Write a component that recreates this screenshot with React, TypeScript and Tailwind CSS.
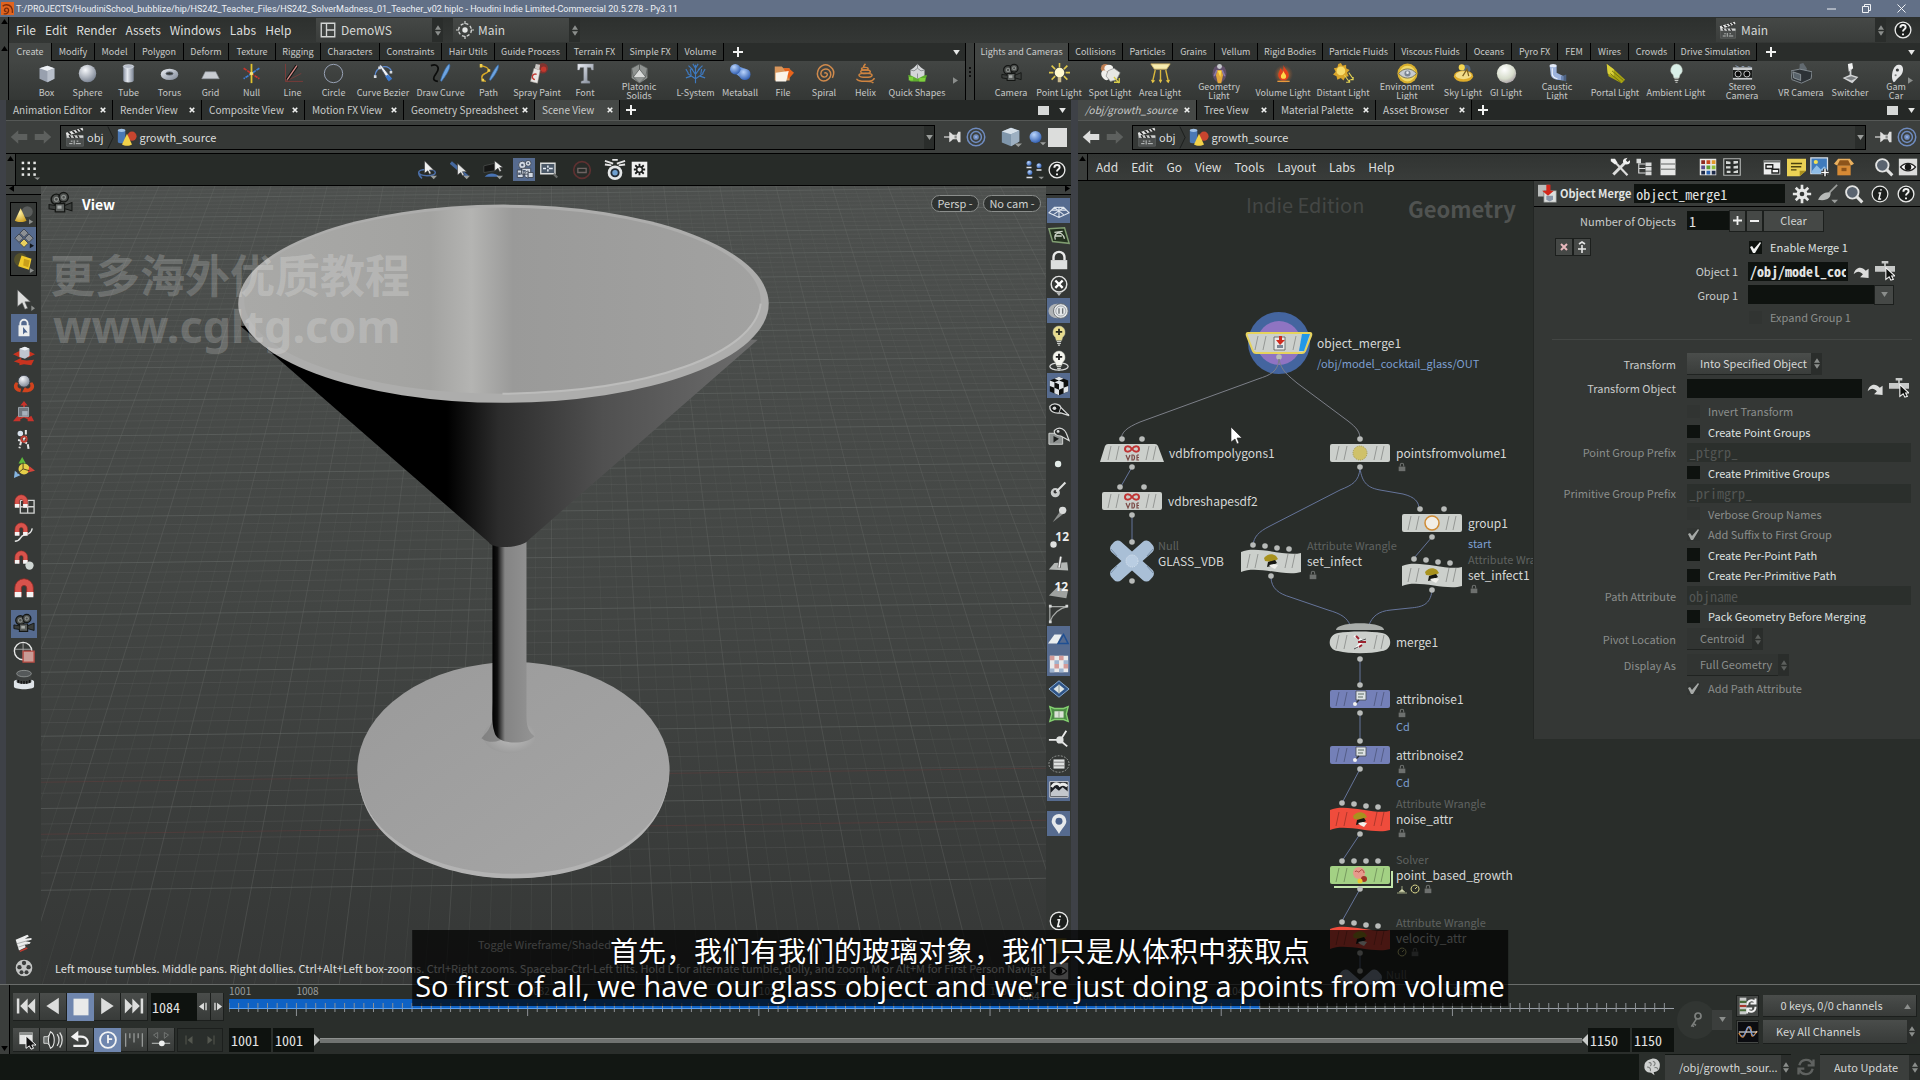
import { useId, type ReactNode } from "react";

const UI = 'font-["Noto_Sans_CJK_SC",sans-serif]';
const MONO = 'font-["Noto_Sans_Mono_CJK_SC","DejaVu_Sans_Mono",monospace]';

/* ---------- icons ---------- */

// Gradients shared by every icon
const SharedDefs = () => (
  <svg className="absolute h-0 w-0" aria-hidden="true">
    <defs>
      <linearGradient id="steel" x1="0" y1="0" x2="1" y2="1">
        <stop offset="0" stopColor="#eef1f6" />
        <stop offset="1" stopColor="#7c8594" />
      </linearGradient>
      <linearGradient id="tube" x1="0" y1="0" x2="1" y2="0">
        <stop offset="0" stopColor="#8a93a3" />
        <stop offset=".4" stopColor="#e4e8ef" />
        <stop offset="1" stopColor="#7c8594" />
      </linearGradient>
      <radialGradient id="ball" cx=".38" cy=".3" r=".75">
        <stop offset="0" stopColor="#f6f8fb" />
        <stop offset="1" stopColor="#77808f" />
      </radialGradient>
      <radialGradient id="blueBall" cx=".38" cy=".3" r=".75">
        <stop offset="0" stopColor="#b9d4fb" />
        <stop offset="1" stopColor="#2c5bb0" />
      </radialGradient>
      <radialGradient id="gold" cx=".38" cy=".3" r=".8">
        <stop offset="0" stopColor="#fff3a8" />
        <stop offset="1" stopColor="#c99a1c" />
      </radialGradient>
      <radialGradient id="giBall" cx=".4" cy=".3" r=".8">
        <stop offset="0" stopColor="#ffffff" />
        <stop offset=".6" stopColor="#d6dccb" />
        <stop offset="1" stopColor="#9c8f9b" />
      </radialGradient>
      <radialGradient id="glow">
        <stop offset="0" stopColor="#ffb347" stopOpacity=".9" />
        <stop offset="1" stopColor="#b0532a" stopOpacity="0" />
      </radialGradient>
    </defs>
  </svg>
);

const magnet = (
  <>
    <path d="M2 15V9a7 7 0 0 1 14 0v6h-5V9a2 2 0 0 0-4 0v6z" fill="#d9534c" stroke="#8f2823" strokeWidth=".6" />
    <path d="M2 12h5v4H2zM11 12h5v4h-5z" fill="#f4f4f4" />
  </>
);

const movieCam = (
  <>
    <circle cx="8" cy="8" r="5" fill="#4b4e4c" stroke="#141614" strokeWidth="1.4" />
    <circle cx="15" cy="6" r="4.5" fill="#4b4e4c" stroke="#141614" strokeWidth="1.4" />
    <circle cx="8" cy="8" r="2" fill="none" stroke="#8b8f8c" strokeWidth="1.2" />
    <circle cx="15" cy="6" r="1.8" fill="none" stroke="#8b8f8c" strokeWidth="1.2" />
    <path d="M7 12h9v8H7z" fill="#5c605e" stroke="#141614" strokeWidth="1.2" />
    <path d="M16 14l7-3v8l-7-2zM7 14l-6-1v4l6 1" fill="#3b3e3c" stroke="#141614" />
    <path d="M9 14h4v3H9z" fill="#a8acaa" />
  </>
);

const lamp = (tint: string) => (
  <>
    <path d="M12 1a7 7 0 0 0-4 12.500l1 3.500h6l1-3.500A7 7 0 0 0 12 1z" fill={tint} stroke="#a9ada0" strokeWidth=".5" />
    <path d="M9.600 18h4.800M9.900 20h4.200M10.800 22h2.400" stroke="#c9ccc8" strokeWidth="1.3" />
  </>
);

const corner = <path d="M16 19h8l-4 4z" fill="#9a9d9b" />;

const glyphs: Record<string, ReactNode> = {
  box: (
    <>
      <path d="M4 6l9-3 8 3v12l-8 4-9-4z" fill="#98a0ae" />
      <path d="M4 6l9-3 8 3-8 3z" fill="#eef1f5" />
      <path d="M13 9l8-3v12l-8 4z" fill="#b8bfca" />
    </>
  ),
  sphere: <circle cx="12" cy="12" r="10" fill="url(#ball)" />,
  tube: (
    <>
      <path d="M6 4v16c0 3 12 3 12 0V4z" fill="url(#tube)" />
      <ellipse cx="12" cy="4" rx="6" ry="2.200" fill="#b6bdc9" stroke="#e9edf3" strokeWidth=".6" />
    </>
  ),
  torus: (
    <>
      <ellipse cx="12" cy="13" rx="10" ry="6.500" fill="url(#steel)" />
      <ellipse cx="12" cy="12" rx="4" ry="1.800" fill="#343735" stroke="#5d6675" />
    </>
  ),
  grid: <path d="M6 10h12l4 8H2z" fill="#c9cdd3" stroke="#8e949d" strokeWidth=".7" />,
  null: (
    <>
      <path d="M3 6l18 12" stroke="#c9362d" strokeWidth="1.800" strokeDasharray="4 1" />
      <path d="M21 6L3 18" stroke="#3d7fd6" strokeWidth="1.800" strokeDasharray="4 1" />
      <path d="M12 1v22" stroke="#e3c42c" strokeWidth="2" />
      <circle cx="12" cy="12" r="2" fill="#f3e27a" />
    </>
  ),
  line: (
    <>
      <path d="M4 1v20h20" stroke="#8a3b38" fill="none" strokeWidth=".9" />
      <path d="M4 21L22 12" stroke="#8a3b38" strokeWidth=".8" />
      <path d="M6 19L17 3" stroke="#101210" strokeWidth="4" />
      <path d="M6 19L17 3" stroke="#d98c89" strokeWidth="1.500" />
    </>
  ),
  circle: <circle cx="12" cy="12" r="10.500" fill="none" stroke="#9aa4b8" strokeWidth="1.100" />,
  bezier: (
    <>
      <path d="M2 15C4 3 17 1 21 9" fill="none" stroke="#5c8ad0" strokeWidth="1.400" />
      <path d="M7 3l10 16 4-2L9 2z" fill="#f0f2f4" stroke="#33405a" strokeWidth=".8" />
      <path d="M14 15l4 6 4-3-5-5z" fill="#3b77c9" />
      <path d="M1 14h3v3H1zM6 4h3v3H6zM19 9h3v3h-3z" fill="#d7dbe0" />
    </>
  ),
  draw: (
    <>
      <path d="M1 3c9-3 10 4 6 9-3 4-5 8 2 9" fill="none" stroke="#0b0c0b" strokeWidth="2" />
      <path d="M22 1c3 3-4 14-9 20l-1-1c2-7 6-16 10-19z" fill="#6ea4e0" stroke="#3568a5" strokeWidth=".8" />
    </>
  ),
  path: (
    <>
      <path d="M3 3c12 2 10 7 5 9s-5 8 1 9" fill="none" stroke="#d9a927" strokeWidth="1.600" />
      <path d="M2 1h3v4H2zM11 7h3v3h-3zM4 18h3v3H4z" fill="#f0cf4c" />
      <path d="M23 2c2 3-4 13-9 18l-1-1c2-6 7-14 10-17z" fill="#6ea4e0" stroke="#3568a5" strokeWidth=".8" />
    </>
  ),
  spray: (
    <>
      <circle cx="18" cy="6" r="6" fill="#b6261f" opacity=".55" />
      <circle cx="19" cy="7" r="3" fill="#e23a2e" opacity=".7" />
      <path d="M8 6l7 2-3 15-8-2z" fill="#e8e6e3" stroke="#a49f9a" strokeWidth=".6" />
      <path d="M10 1l5 1-1 6-5-2z" fill="#c9c6c3" />
      <path d="M11 13c-5-2-7 5-2 6" fill="none" stroke="#c23a32" strokeWidth="1.600" />
    </>
  ),
  font: <path d="M3 1h18v7h-2l-1-3h-4v15l3 1v2H7v-2l3-1V5H6L5 8H3z" fill="url(#steel)" stroke="#8a909a" strokeWidth=".4" />,
  platonic: (
    <>
      <path d="M12 1l9 5v11l-9 6-9-6V6z" fill="#8f9391" />
      <path d="M12 7l7 9H5z" fill="#d9dbda" />
      <path d="M12 1v6l7 9 2-10zM12 1v6l-7 9L3 6zM5 16l7 7 7-7" fill="none" stroke="#555957" strokeWidth=".8" />
    </>
  ),
  lsystem: (
    <g fill="none" stroke="#3f7ac0" strokeWidth="1.300">
      <path d="M12 23V9M12 18L3 12M12 18l9-6M12 13L7 6M12 13l5-7M12 9V2" />
      <path d="M7 15l-6 2M4 12L1 7M7 14l-1-7M17 15l6 2M20 12l3-5M18 13l1-6M9 8L4 3M15 8l5-5M12 6L9 1M12 6l3-5" />
    </g>
  ),
  metaball: (
    <>
      <path d="M10 4l9 3-6 10-8-6z" fill="#6f9be0" />
      <circle cx="6" cy="7" r="6" fill="url(#blueBall)" />
      <circle cx="17" cy="13" r="6.500" fill="url(#blueBall)" />
    </>
  ),
  file: (
    <>
      <path d="M2 4h8l2 2h7v14H2z" fill="#d8965c" />
      <path d="M12 6h6l6 5-6 7z" fill="#e8641c" />
      <path d="M3 11l15-2-3 12H3z" fill="#fbf4ea" />
    </>
  ),
  spiral: (
    <path
      d="M12 12c1-2 4 0 3 2-1 3-6 3-7-1-1-5 5-8 9-5 4 4 2 10-3 12-6 2-11-3-10-9C5 4 12 0 17 3c5 3 7 8 4 14"
      fill="none"
      stroke="#d08a4c"
      strokeWidth="1.700"
    />
  ),
  helix: (
    <g fill="none" stroke="#cf8440" strokeWidth="1.700">
      <path d="M12 1c-3 3-3 4 0 4 4 0 4 3 0 3-6 0-6-3 0-3" />
      <ellipse cx="12" cy="10" rx="5.500" ry="2" />
      <ellipse cx="12" cy="14" rx="7.500" ry="2.400" />
      <path d="M2 18c0 4 20 4 20-1M12 21c4 0 8 0 9 2" />
    </g>
  ),
  quick: (
    <>
      <path d="M1 14h22l-3 7H4z" fill="#5fae2f" />
      <path d="M12 1l4 4 4 3v6l-8 4-8-4V8l4-3z" fill="#d4d6d8" />
      <path d="M12 1v5l4 3 4-1M12 6L8 9 4 8M12 12v6" stroke="#85898c" fill="none" />
      <path d="M2 16h5v4H2zM14 17h7v4h-7z" fill="#7fd13f" />
    </>
  ),
  camera: movieCam,
  pointLight: (
    <>
      <path d="M12 0v5M3 3l4 4M0 11h5M3 19l4-4M21 3l-4 4M24 11h-5M21 19l-4-4" stroke="#e0c84c" strokeWidth="1.800" />
      <circle cx="12" cy="11" r="5.500" fill="#fff9cf" />
      <path d="M10 16h4v6h-4z" fill="#c9b98a" />
    </>
  ),
  spotLight: (
    <>
      <circle cx="6" cy="6" r="5" fill="#c07f52" />
      <ellipse cx="10" cy="6" rx="5" ry="4" fill="#f3f3f0" />
      <ellipse cx="6" cy="14" rx="4" ry="6" fill="#efefec" transform="rotate(-30 6 14)" />
      <path d="M9 9l7-3 7 5-4 8-7 2-5-6z" fill="#e7e7e4" stroke="#88898a" strokeWidth=".8" />
      <path d="M16 16l6 7M16 22h6v-5" stroke="#d8cd4b" strokeWidth="1.500" fill="none" />
    </>
  ),
  areaLight: (
    <>
      <path d="M1 1h22l-4 6H5z" fill="#f6ecb0" stroke="#d2b765" />
      <path d="M6 8L3 21M12 8v13M18 8l3 13" stroke="#d8b73c" strokeWidth="1.600" />
      <path d="M1 19l2 4 3-3zM10 19l2 4 2-4zM18 20l3 3 2-4z" fill="#e3c447" />
    </>
  ),
  geoLight: (
    <>
      <ellipse cx="12" cy="12" rx="8" ry="10" fill="#a06ab8" opacity=".35" />
      <circle cx="12" cy="4" r="2.800" fill="#c5c8cc" />
      <path d="M9 8h6l1 6-2 9h-4l-2-9z" fill="#e0a53a" />
      <path d="M9 8l-3 7M15 8l3 7" stroke="#8b7aa8" strokeWidth="1.800" />
      <path d="M10 9h4l-1 7z" fill="#f9e04f" />
    </>
  ),
  volumeLight: (
    <>
      <circle cx="12" cy="13" r="11" fill="url(#glow)" />
      <path d="M12 2c1 5 6 7 6 12a6 6 0 0 1-12 0c0-4 2-4 2-8 2 1 3 3 3 4 1-2 1-5 1-8z" fill="#e2401c" />
      <path d="M12 9c1 3 3 4 3 6a3 3 0 0 1-6 0c0-2 2-3 3-6z" fill="#ffd84a" />
      <path d="M5 21h14" stroke="#e89b3d" strokeWidth="1.500" />
    </>
  ),
  distantLight: (
    <>
      <path d="M9 0l2 3 4-1v4l4 2-3 3 2 4-4 1-2 4-3-3-4 2-1-4-4-2 3-3-2-4 4-1 1-4z" fill="#d9a52b" />
      <circle cx="9" cy="9" r="5" fill="#f8dc6a" />
      <path d="M13 14l6 8M18 11l5 7M15 22h4v-3M20 19h3v-3" stroke="#e3d354" strokeWidth="1.300" fill="none" />
    </>
  ),
  envLight: (
    <>
      <circle cx="12" cy="12" r="11.500" fill="#d9b02e" />
      <circle cx="12" cy="12" r="9" fill="#f1d968" />
      <path d="M2 12c5-7 15-7 20 0-5 7-15 7-20 0z" fill="#c6cbd0" stroke="#6d6a52" />
      <circle cx="12" cy="12" r="3.500" fill="#7b8592" />
      <circle cx="12" cy="11" r="1.500" fill="#e6ebf0" />
    </>
  ),
  skyLight: (
    <>
      <circle cx="15" cy="7" r="5" fill="#6b93c9" opacity=".45" />
      <circle cx="10" cy="5" r="3.500" fill="#f5d650" />
      <ellipse cx="12" cy="15" rx="11" ry="6.500" fill="#e0ad2b" />
      <ellipse cx="12" cy="14" rx="9" ry="4.500" fill="#f3dd8a" />
      <path d="M11 15l5-8 2 8" fill="none" stroke="#7a5d20" strokeWidth="1.400" />
    </>
  ),
  giLight: <circle cx="12" cy="12" r="11" fill="url(#giBall)" />,
  causticLight: (
    <>
      <path d="M3 3h8v8l8 4v5l-8-1c-5-1-7-4-7-8z" fill="#9db3dc" />
      <ellipse cx="7" cy="3" rx="4" ry="1.800" fill="#e3ebf8" />
      <path d="M6 6v6c0 3 2 5 6 6" stroke="#eef3fb" fill="none" strokeWidth="1.300" />
      <path d="M16 15l6-2v8l-6-2z" fill="#55729f" opacity=".7" />
    </>
  ),
  portalLight: (
    <>
      <path d="M2 1l8 6 13 12-4 4L4 15z" fill="#a8a412" />
      <path d="M2 1l8 6v8L3 12z" fill="#d9cf3a" />
      <path d="M8 9l13 11M6 12l12 10" stroke="#6f6d10" />
    </>
  ),
  ambientLight: lamp("#d9efe8"),
  stereoCam: (
    <>
      <path d="M1 5h22v14H1z" fill="#c7cacc" />
      <path d="M1 8h22v9H1z" fill="#1b1d1c" />
      <circle cx="7" cy="12.500" r="3.500" fill="#0a0a0a" stroke="#d8dadb" />
      <circle cx="17" cy="12.500" r="3.500" fill="#0a0a0a" stroke="#d8dadb" />
      <path d="M4 3l4 2M11 4h3M18 4l4 1" stroke="#8fa0b8" />
    </>
  ),
  vrCam: (
    <>
      <path d="M10 1l4-1 4 6v9H9z" fill="#626a70" />
      <path d="M0 9l10-2 14 3-1 8-11 5-11-4z" fill="#2d3236" stroke="#8a9299" />
      <path d="M2 10l9 3v7l-8-3z" fill="#59636b" stroke="#c4cbd0" strokeWidth=".6" />
    </>
  ),
  switcher: (
    <>
      <path d="M9 1l5-1 1 6-5 4z" fill="#f0f1f1" />
      <path d="M12 7v8" stroke="#cfd2d3" strokeWidth="2" />
      <path d="M3 17l9-4 9 3-7 7z" fill="#d3d5d6" />
      <path d="M6 17l7-2 6 2-6 3z" fill="#7d8183" />
    </>
  ),
  gamepad: (
    <>
      <path d="M9 22c-4-4-2-19 5-20s7 9 2 13-4 5-7 7z" fill="#e6e7e8" />
      <circle cx="13" cy="8" r="1.800" fill="#3b3e3d" />
      <circle cx="11" cy="14" r="1.200" fill="#7a7d7c" />
    </>
  ),
  houdini: (
    <>
      <path d="M0 0h24v24H0z" fill="#e0641f" />
      <path d="M5 22c6 0 9-3 9-7s-5-5-7-2 1 5 3 4M21 20c1-10-4-15-11-15-3 0-5 1-7 3" fill="none" stroke="#7a2a08" strokeWidth="2.500" />
    </>
  ),
  layout: <path d="M3 3h18v18H3zM10 3v18M10 12h11" fill="none" stroke="#d3d5d4" strokeWidth="1.800" />,
  radial: (
    <>
      <circle cx="12" cy="12" r="8.500" fill="none" stroke="#d3d5d4" strokeWidth="1.800" strokeDasharray="4 2.600" />
      <circle cx="12" cy="12" r="3.600" fill="#e6e8e7" />
      <path d="M12 0v4M12 20v4M0 12h4M20 12h4" stroke="#d3d5d4" strokeWidth="1.600" />
    </>
  ),
  clapper: (
    <>
      <path d="M2 11h20v12H2z" fill="#4a4d4c" stroke="#5d605f" />
      <path d="M1 7l20-6 1 3L2 11z" fill="#e6e7e6" />
      <path d="M4 6l3 3M9 5l3 2M13 3l3 3M17 2l3 3" stroke="#222" strokeWidth="1.800" />
      <path d="M2 10h20v3H2z" fill="#cfd1d0" />
      <path d="M5 10l2 3M10 10l2 3M15 10l2 3" stroke="#222" strokeWidth="1.600" />
      <path d="M5 20h4M7 17h2M11 16v5M13 20h6M14 17h2" stroke="#c3c6c5" strokeWidth="1.200" />
    </>
  ),
  shapes: (
    <>
      <path d="M1 4h9v14c0 2-9 2-9 0z" fill="#4a78b5" />
      <ellipse cx="5.500" cy="4" rx="4.500" ry="2" fill="#9fc0e6" />
      <circle cx="18" cy="11" r="5.500" fill="#c9452f" />
      <path d="M12 8l6 13c-3 2-9 2-12 0z" fill="#f2d24a" />
    </>
  ),
  arrowL: <path d="M1 12l10-9v5h12v8H11v5z" fill="currentColor" />,
  arrowR: <path d="M23 12L13 3v5H1v8h12v5z" fill="currentColor" />,
  pin: (
    <>
      <path d="M0 12h9" stroke="#e9eae9" strokeWidth="1.500" />
      <path d="M7 5l3 2c1 3 5 2 7 2l2-4h3v14h-3l-2-4c-2 0-6-1-7 2l-3 2z" fill="#dddedd" />
      <path d="M14 10h3v4h-3z" fill="#8b8e8c" />
    </>
  ),
  target: (
    <g fill="none" stroke="#6f8cc0" strokeWidth="1.800">
      <circle cx="12" cy="12" r="10.500" />
      <circle cx="12" cy="12" r="6.500" />
      <circle cx="12" cy="12" r="2.500" fill="#8faadb" />
    </g>
  ),
  cube: (
    <>
      <path d="M2 6l10-4 9 3v12l-9 5-10-4z" fill="#7f96ab" />
      <path d="M2 6l10-4 9 3-9 4z" fill="#d6e0e9" />
      <path d="M12 9l9-4v12l-9 5z" fill="#9db0c2" />
      {corner}
    </>
  ),
  blueDot: (
    <>
      <circle cx="10" cy="12" r="8" fill="url(#blueBall)" />
      {corner}
    </>
  ),
  help: (
    <>
      <circle cx="12" cy="12" r="10.500" fill="#1c1f1d" stroke="#e8e9e8" strokeWidth="1.800" />
      <path d="M8.500 9c0-5 7-4.500 7-.5 0 2.500-3.500 2.500-3.500 5.500M12 16.500v2.500" fill="none" stroke="#f2f3f2" strokeWidth="2.600" />
    </>
  ),
  info: (
    <>
      <circle cx="12" cy="12" r="10.500" fill="#1c1f1d" stroke="#e8e9e8" strokeWidth="1.600" />
      <path d="M13.500 5.500l-.4 2M10 10.500h2.500l-2 8h3" fill="none" stroke="#f2f3f2" strokeWidth="2" />
    </>
  ),
  dots: (
    <g fill="#e6e7e6">
      {[2, 9, 16].map((y) => [2, 9, 16].map((x) => <rect key={`${x}-${y}`} x={x} y={y} width="3" height="3" />))}
      <path d="M17 21h7l-3 3z" fill="#8d908e" />
    </g>
  ),
  lasso: (
    <>
      <path d="M2 15c0-5 20-5 20 0s-20 5-20 0c0 4 4 7 4 7" fill="none" stroke="#4b6fa8" strokeWidth="1.800" />
      <path d="M9 1v15l4-3 2 4 2-1-2-4h5z" fill="#f0f1f0" stroke="#333" strokeWidth=".7" />
      {corner}
    </>
  ),
  brushSel: (
    <>
      <path d="M1 3l20 17" stroke="#44689f" strokeWidth="4" />
      <path d="M9 4v14l4-3 2 4 2-1-2-4h5z" fill="#e2e4e3" stroke="#333" strokeWidth=".7" />
      {corner}
    </>
  ),
  laserSel: (
    <>
      <path d="M1 7l13-3v9L1 15z" fill="#151615" stroke="#5a5d5b" strokeWidth=".7" />
      <path d="M2 20c5-5 12-5 18 0z" fill="#4873b3" />
      <path d="M14 1v12l4-3 2 4 2-1-2-4h4z" fill="#f0f1f0" stroke="#333" strokeWidth=".7" />
      {corner}
    </>
  ),
  camSet: (
    <>
      <g fill="#d3d9e2" stroke="#39414d" strokeWidth="1">
        <circle cx="10" cy="6" r="4.500" />
        <circle cx="17" cy="4" r="3.500" />
        <path d="M9 10h11v7H9zM4 12h7v9H4zM13 15l4-2v9l-4-2z" />
        <path d="M17 15h6v6h-6z" />
      </g>
      <g fill="#4d5a70">
        <circle cx="10" cy="6" r="1.500" />
        <circle cx="17" cy="4" r="1.200" />
        <path d="M11 12h3v2h-3zM5 15h3v3H5z" />
      </g>
    </>
  ),
  viewBox: (
    <>
      <path d="M1 3h19v14H1z" fill="#4b5968" stroke="#dcdedd" strokeWidth="1.800" />
      <path d="M4 10h4M12 10h5M10.500 6v3M10.500 11v3" stroke="#e8eef8" strokeWidth="2" />
      <path d="M18 17l5 5" stroke="#6b6e6c" strokeWidth="3" />
    </>
  ),
  stopRed: (
    <>
      <circle cx="12" cy="12" r="10" fill="none" stroke="#5e3131" strokeWidth="2" />
      <path d="M7 10h10v5H7z" fill="none" stroke="#6e6362" strokeWidth="1.600" />
    </>
  ),
  heliCam: (
    <>
      <path d="M1 2l9 3M23 2l-9 3M1 6l7 1M23 6l-7 1M9 1h6" stroke="#e6e6e6" strokeWidth="2" />
      <circle cx="12" cy="15" r="8" fill="#e5e7e8" />
      <circle cx="12" cy="15" r="5" fill="#222a33" />
      <circle cx="12" cy="15" r="3" fill="#6fa0d0" />
    </>
  ),
  gearBox: (
    <>
      <path d="M1 1h22v22H1z" fill="#f1f2f1" />
      <path d="M12 4v16M4 12h16M6 6l12 12M18 6L6 18" stroke="#1c1e1d" strokeWidth="2.600" />
      <circle cx="12" cy="12" r="4" fill="#f1f2f1" stroke="#1c1e1d" strokeWidth="2" />
    </>
  ),
  people: (
    <>
      <g fill="url(#blueBall)">
        <circle cx="6" cy="4" r="3" />
        <circle cx="18" cy="7" r="3" />
        <circle cx="7" cy="15" r="3" />
      </g>
      <path d="M3 9h6M15 12h6M3 21h7" stroke="#dfe4ea" strokeWidth="2" />
      <path d="M17 20h7l-3 3z" fill="#8d908e" />
    </>
  ),
  movieCam,
  // left tool column
  primitives: (
    <>
      <circle cx="16" cy="8" r="6.500" fill="#595c5b" />
      <path d="M8 4l7 15c-3 2-11 2-14 0z" fill="url(#gold)" />
      <path d="M18 17l5 3-5 3z" fill="#8d908e" />
    </>
  ),
  diamonds: (
    <>
      <g stroke="#2b2f36" strokeWidth=".8">
        <path d="M12 0l5 5-5 5-5-5zM6 6l5 5-5 5-5-5zM18 6l5 5-5 5-5-5z" fill="#8b8f93" />
        <path d="M12 12l5 5-5 5-5-5z" fill="#e8cf5e" />
      </g>
      <path d="M19 17l5 3-5 3z" fill="#15181c" />
    </>
  ),
  goldCube: (
    <>
      <circle cx="8" cy="8" r="8" fill="#a08a10" opacity=".3" />
      <path d="M9 3l12 4-3 13-13-4z" fill="#f0c92c" />
      <path d="M12 7l7 2-2 8-6-2z" fill="#c99f1a" />
      <path d="M19 18l5 3-5 3z" fill="#8d908e" />
    </>
  ),
  cursor: (
    <>
      <path d="M5 1v18l5-4 3 7 3-1-3-7h6z" fill="#dcdddc" stroke="#5a5c5b" strokeWidth=".6" />
      <path d="M20 18l4 3-4 3z" fill="#8d908e" />
    </>
  ),
  lock: (
    <>
      <path d="M8 10V7a4 4 0 0 1 8 0v3" fill="none" stroke="#eceeed" strokeWidth="2" />
      <path d="M6 9h12v12H6z" fill="#eceeed" />
      <path d="M11 11v8l2-2h3z" fill="#4a628c" />
    </>
  ),
  padlock: (
    <>
      <path d="M6 11V8a6 6 0 0 1 12 0v3" fill="none" stroke="#e9eae9" strokeWidth="2.600" />
      <path d="M3 11h18v10H3z" fill="#dddfde" />
    </>
  ),
  smallLock: (
    <>
      <path d="M8 11V7a4 4 0 0 1 8 0v4" fill="none" stroke="#6d706e" strokeWidth="2.600" />
      <path d="M4 11h16v11H4z" fill="#6d706e" />
    </>
  ),
  move: (
    <>
      <path d="M0 10l8-4v3h8V6l8 4-8 4v-2H8v2zM1 18l8-4v2l6 1 8-1-3 6-8-1-5 1v-2z" fill="#c8331f" />
      <path d="M7 4l6-2 5 2v8l-5 3-6-2z" fill="#bfc6cf" />
      <path d="M7 4l6-2 5 2-5 2z" fill="#edf0f4" />
    </>
  ),
  rotate: (
    <>
      <path d="M3 10c-4 4-2 10 5 11l1-4c-4 0-5-3-3-6zM21 10c4 4 2 10-5 11h-6l3-6 2 2c4 0 5-3 3-6z" fill="#d0431e" />
      <circle cx="12" cy="9" r="6.500" fill="url(#ball)" stroke="#3b4148" />
    </>
  ),
  scale: (
    <>
      <path d="M12 0l4 5h-3v7h-2V5H8zM0 22l5-6 3 2 4-3 5 3 3-2 3 6h-7v-2l-4-2-4 2v2z" fill="#c8332b" />
      <path d="M6 7h11v10H6z" fill="#70777f" stroke="#a0a8b0" />
      <path d="M10 11h6v5h-6z" fill="#a7b2bd" />
    </>
  ),
  pose: (
    <>
      <circle cx="8" cy="5" r="3" fill="#d8e1ec" />
      <path d="M14 1v7l-4 5-5-1M11 13l5 3 1 6M9 13l-2 8" fill="none" stroke="#e4e4e4" strokeWidth="2.200" strokeDasharray="5 1.500" />
      <circle cx="12" cy="11" r="3" fill="none" stroke="#c23b30" strokeWidth="2" />
    </>
  ),
  handles: (
    <>
      <circle cx="12" cy="13" r="6" fill="#e5cf49" />
      <path d="M10 0l4 7H6z" fill="#5cb83d" />
      <path d="M24 15l-8 2 2-7z" fill="#d4453a" />
      <path d="M1 23l1-8 6 5z" fill="#86b5e0" />
      <path d="M11 13V6M11 13l7 2M11 13l-6 5" stroke="#4a3b20" />
    </>
  ),
  snapGrid: (
    <>
      <path d="M8 8h15v14H8zM8 15h15M16 8v14" fill="none" stroke="#cfd1d0" strokeWidth="1.500" />
      {magnet}
    </>
  ),
  snapCurve: (
    <>
      <path d="M2 22c8 0 4-6 11-7 6-1 7-3 8-7" fill="none" stroke="#e2e3e2" strokeWidth="1.600" />
      {magnet}
    </>
  ),
  snapPoint: (
    <>
      {magnet}
      <circle cx="18" cy="18" r="4.500" fill="#cfd6d3" />
    </>
  ),
  snapMulti: <g transform="translate(-1 -1) scale(1.450 1.450)">{magnet}</g>,
  renderRegion: (
    <>
      <circle cx="11" cy="11" r="9.500" fill="none" stroke="#e7e8e7" strokeWidth="1.500" />
      <path d="M2 9h18M11 2v18" stroke="#a7a9a8" fill="none" />
      <path d="M11 11h12v12H11z" fill="#c99c96" stroke="#b74a42" strokeWidth="1.500" />
    </>
  ),
  lens: (
    <>
      <path d="M1 14c0-4 22-4 22 0v5c0 4-22 4-22 0z" fill="#dfe4e8" />
      <path d="M4 5v9c0 3 16 3 16 0V5z" fill="#3c3f3e" />
      <ellipse cx="12" cy="5" rx="8" ry="3.500" fill="#55595a" stroke="#8c908f" />
      <path d="M6 12v3M9 13v3M12 13v3M15 13v3M18 12v3" stroke="#111" strokeWidth="1.400" />
    </>
  ),
  hand: (
    <>
      <path d="M2 8l14-6 2 2-5 3 8-1v2l-7 2 6 1-1 2-6 1 1 3-8 4z" fill="#eceded" />
      <path d="M3 13l14-4M5 17l12-4" stroke="#8d908e" strokeWidth=".8" />
      <path d="M7 22l9-4" stroke="#c23b30" strokeWidth="1.800" />
    </>
  ),
  reel: (
    <>
      <circle cx="12" cy="12" r="10" fill="#c3c5c4" />
      <g fill="#3a3c3b">
        <circle cx="12" cy="6" r="2.600" />
        <circle cx="6.500" cy="11" r="2.600" />
        <circle cx="17.500" cy="11" r="2.600" />
        <circle cx="9" cy="17" r="2.400" />
        <circle cx="15" cy="17" r="2.400" />
      </g>
    </>
  ),
  // display options column
  plane: <path d="M1 14l6-6h10l6 6-11 5zM7 8l10 8M17 8L6 16M4 11h16M12 8v11" fill="none" stroke="#dfe5ee" strokeWidth="1.200" />,
  plane2: (
    <>
      <path d="M1 4l17-1 5 17-18-2z" fill="#23311f" stroke="#7f9c70" strokeWidth="1.600" />
      <path d="M8 16c-3-9 8-10 10-1M7 8l9-1M7 12h8" fill="none" stroke="#cfd6ca" strokeWidth="1.400" />
    </>
  ),
  noLight: (
    <>
      <circle cx="12" cy="10" r="8.500" fill="none" stroke="#dfe0df" strokeWidth="1.600" />
      <path d="M8 6l8 8M16 6l-8 8" stroke="#fff" strokeWidth="2.600" />
      <path d="M9 19h6l-3 4z" fill="#b7b9b8" />
    </>
  ),
  headlight: (
    <>
      <ellipse cx="10" cy="12" rx="9.500" ry="8" fill="#aeb2b5" />
      <circle cx="14" cy="12" r="8" fill="#e5e8ea" stroke="#676c70" />
      <circle cx="14" cy="12" r="5.500" fill="none" stroke="#9aa0a4" />
      <path d="M12 9v6M16 9v6" stroke="#6f7478" strokeWidth="1.500" />
    </>
  ),
  lampYellow: (
    <>
      {lamp("#e8dc8e")}
      <path d="M12 4v7M8.500 7.500h7" stroke="#2a2c22" strokeWidth="2" />
    </>
  ),
  lampWhite: (
    <>
      <ellipse cx="12" cy="18" rx="10" ry="4" fill="none" stroke="#d6d7d6" strokeWidth="1.400" />
      {lamp("#f5f5ee")}
      <path d="M12 4v7M8.500 7.500h7" stroke="#222" strokeWidth="2" />
    </>
  ),
  checkerCube: (
    <>
      <path d="M2 6l10-4 10 4v12l-10 4-10-4z" fill="#0d0e0d" />
      <path d="M7 4l5 2 5-2-5-2zM7 8l5-2 5 2-5 2zM2 6l5 2v6l-5-2zM12 10l5-2v6l-5 2zM7 14l5 2v6l-5-2zM17 14l5-2v6l-5 2z" fill="#dfe3e7" />
    </>
  ),
  ghost: (
    <>
      <path d="M2 7c4-5 11-2 12 1l9 9-9-3C7 15 2 13 2 7z" fill="#171918" stroke="#d7d9d8" strokeWidth="1.400" />
      <circle cx="7" cy="9" r="2" fill="#d7d9d8" />
      <path d="M14 8l-2 6" stroke="#d7d9d8" />
    </>
  ),
  ghostPlay: (
    <>
      <path d="M1 9h15v12H1z" fill="#8d9190" stroke="#d7d9d8" />
      <path d="M6 12l6 3-6 4z" fill="#1c1e1d" />
      <path d="M7 6c6-6 12 0 13 3l3 8-9-5c-4 0-8-2-7-6z" fill="#2b2d2c" stroke="#d7d9d8" strokeWidth="1.300" />
      <circle cx="11" cy="7" r="1.500" fill="#d7d9d8" />
    </>
  ),
  pt: <circle cx="11" cy="12" r="3.500" fill="#e3ebe8" />,
  ptNormal: (
    <>
      <circle cx="8" cy="16" r="5" fill="#c9cccb" />
      <circle cx="8" cy="15" r="2" fill="#333" />
      <path d="M9 15L19 5" stroke="#dfe1e0" strokeWidth="2.200" />
    </>
  ),
  ptTrail: (
    <>
      <path d="M5 21L14 8l4 3z" fill="#8c8f8d" />
      <circle cx="16" cy="8" r="4" fill="#d9dbda" />
    </>
  ),
  ptNum: (
    <>
      <circle cx="6" cy="18" r="3.500" fill="#dfe1e0" />
      <text x="8" y="14" fontSize="13" fontWeight="700" fill="#ececec" className='font-["Open_Sans",sans-serif]'>12</text>
    </>
  ),
  primNormal: (
    <>
      <path d="M1 18l6-7 14-1 1 9z" fill="#b3b6b4" />
      <path d="M12 16l2-12" stroke="#555" strokeWidth="3.500" />
      <path d="M12 16l2-12" stroke="#f0f1f0" strokeWidth="1.800" />
    </>
  ),
  primNum: (
    <>
      <path d="M1 19l9-9 12 3-2 9z" fill="#9fa2a0" />
      <text x="7" y="14" fontSize="13" fontWeight="700" fill="#f2f2f2" className='font-["Open_Sans",sans-serif]'>12</text>
    </>
  ),
  hull: (
    <>
      <path d="M2 21V4h19M2 21C5 12 12 6 21 4" fill="none" stroke="#a6a9a7" strokeWidth="1.300" />
      <path d="M1 2h3v3H1zM19 2h3v3h-3zM1 19h3v3H1z" fill="#d6d8d7" />
    </>
  ),
  shadePlane: (
    <>
      <path d="M0 17L7 7h8l-5 10z" fill="#eaeef0" />
      <path d="M11 17l6-10 5 10z" fill="none" stroke="#1f4f93" strokeWidth="1.600" />
    </>
  ),
  checker: (
    <>
      <path d="M2 3h20v18H2z" fill="#e9e9ea" />
      <path d="M2 3h5v5H2zM12 3h5v5h-5zM7 12h5v5H7zM17 12h5v5h-5z" fill="#d39a98" />
      <path d="M7 8h5v4H7zM17 8h5v4h-5zM12 17h5v4h-5zM2 17h5v4H2z" fill="#9fb4cf" />
    </>
  ),
  bluePlane: (
    <>
      <path d="M12 3l11 9-11 9L1 12z" fill="#2f5487" stroke="#8fb3da" />
      <path d="M12 7l6 5-6 5-6-5z" fill="#dfe5e4" />
      <path d="M12 7v10" stroke="#8a9590" />
    </>
  ),
  greenCage: (
    <>
      <path d="M2 4l5 2h10l5-2-2 8 2 8-5-2H7l-5 2 2-8z" fill="#4c8a45" stroke="#83cf70" strokeWidth="1.500" />
      <path d="M7 9h10v7H7z" fill="#dbe2d8" />
      <path d="M12 9v7" stroke="#8aa183" />
    </>
  ),
  axisBall: (
    <>
      <path d="M1 13h9M15 11l5-8M15 15l6 5" stroke="#e9eae9" strokeWidth="2" />
      <circle cx="13" cy="13" r="4" fill="#dfe1e0" />
    </>
  ),
  groupList: (
    <>
      <ellipse cx="12" cy="12" rx="11" ry="9" fill="none" stroke="#9fa2a0" strokeDasharray="2 1.500" />
      <path d="M6 7h12v10H6z" fill="#dfe1e0" />
      <path d="M6 10h12M6 14h12" stroke="#777" />
    </>
  ),
  picture: (
    <>
      <path d="M2 4h20v17H2z" fill="#1b1e24" stroke="#e2e4e6" />
      <path d="M3 16l5-5 4 3 4-4 6 5v5H3z" fill="#c3c7cc" />
      <path d="M4 10c3-6 8-4 9-2 3-2 6-1 8 1" fill="none" stroke="#e9eaea" strokeWidth="3" />
    </>
  ),
  mapPin: (
    <>
      <path d="M12 23C9 17 4 13 4 9a8 8 0 0 1 16 0c0 4-5 8-8 14z" fill="#e6e9eb" />
      <circle cx="12" cy="9" r="3.800" fill="#4b628b" />
    </>
  ),
  eye: (
    <>
      <path d="M1 2h22v20H1z" fill="#dcdddc" />
      <path d="M3 12c5-6 13-6 18 0-5 6-13 6-18 0z" fill="#fff" stroke="#222" strokeWidth="1.500" />
      <circle cx="12" cy="12" r="4" fill="#161716" />
    </>
  ),
  barrel: <path d="M3 3h18v6h-5v12H8V9H3z" fill="#9a8220" />,
  // network menu bar
  wrench: (
    <>
      <path d="M5 5l16 17" stroke="#dcdddc" strokeWidth="2.600" />
      <path d="M19 6L4 21" stroke="#dcdddc" strokeWidth="3.600" />
      <path d="M1 2l5 0 3 5-3 2-5-4z" fill="#f0f1f0" />
      <path d="M17 2l4-1-2 3 2 2 3-2c1 5-4 6-7 4-2-2-2-4 0-6z" fill="#f0f1f0" />
    </>
  ),
  tree: (
    <>
      <path d="M2 1h6v6H2zM14 6h8v5h-8zM14 12h8v5h-8zM14 18h8v5h-8z" fill="#d8dad9" />
      <path d="M5 7v13h9M5 8h9M5 14h9" fill="none" stroke="#d8dad9" strokeWidth="1.500" />
    </>
  ),
  list: (
    <>
      <path d="M2 1h20v22H2z" fill="#e6e7e6" />
      <path d="M2 8h20M2 15h20" stroke="#8d908e" strokeWidth="2" />
    </>
  ),
  palette: (
    <>
      <path d="M1 1h22v22H1z" fill="#e8e9e8" />
      <path d="M3 3h5v5H3z" fill="#8e2a22" />
      <path d="M10 3h5v5h-5z" fill="#c8471e" />
      <path d="M17 3h5v5h-5z" fill="#e29a2a" />
      <path d="M3 10h5v5H3z" fill="#5b4a8c" />
      <path d="M10 10h5v5h-5z" fill="#5f9e35" />
      <path d="M17 10h5v5h-5z" fill="#8fbf3a" />
      <path d="M3 17h5v5H3zM17 17h5v5h-5z" fill="#1e2b4a" />
      <path d="M10 17h5v5h-5z" fill="#2b62b0" />
    </>
  ),
  shapePalette: (
    <>
      <path d="M1 1h22v22H1z" fill="#2a2d2b" stroke="#b5b8b6" strokeWidth="1.500" />
      <path d="M4 4l6 1v3H4zM14 4h6v3l-6 1zM4 11h6v3H4zM14 11l6-1v4h-6zM5 17h5v3H5zM14 18l6-2v4h-6z" fill="#d5d8d6" />
    </>
  ),
  netbox: (
    <>
      <path d="M1 3h22v19H1z" fill="#eceded" />
      <path d="M1 3h22v3H1z" fill="#6f7270" />
      <path d="M4 9h9v5H4zM12 15h9v5h-9z" fill="#f7f7f7" stroke="#1e201f" strokeWidth="1.800" />
    </>
  ),
  sticky: (
    <>
      <path d="M0 1h24v15l-8 7H0z" fill="#ebd255" />
      <path d="M16 23v-7h8z" fill="#a98f1e" />
      <path d="M5 7h14M5 11h13M5 15h7" stroke="#4c430f" strokeWidth="1.800" />
    </>
  ),
  addPic: (
    <>
      <path d="M1 1h20v19H1z" fill="#3f7bbd" stroke="#d7dee6" strokeWidth="1.500" />
      <path d="M2 17l6-7 5 5 4-4 4 4v5H2z" fill="#8fbde6" />
      <circle cx="7" cy="6" r="2.500" fill="#f4e153" />
      <path d="M18 14v9M13.500 18.500h9" stroke="#111" strokeWidth="4" />
      <path d="M18 14v9M13.500 18.500h9" stroke="#fff" strokeWidth="1.800" />
    </>
  ),
  crate: (
    <>
      <path d="M4 10h16v12H4z" fill="#d68a35" />
      <path d="M5 2h14l5 6-3 2H3L0 8z" fill="#eab15f" />
      <path d="M4 10l3-6h10l3 6z" fill="#8d541a" />
      <path d="M9 13h6v4H9z" fill="#8d541a" />
    </>
  ),
  magnifier: (
    <>
      <circle cx="10" cy="10" r="7.500" fill="#5a6470" stroke="#e3e4e3" strokeWidth="2.200" />
      <path d="M15.500 15.500L22 22" stroke="#e3e4e3" strokeWidth="3.600" />
    </>
  ),
  gear: (
    <>
      <path d="M12 1v22M1 12h22M4.500 4.500l15 15M19.500 4.500l-15 15" stroke="#e6e7e6" strokeWidth="3.200" />
      <circle cx="12" cy="12" r="6.500" fill="#e6e7e6" />
      <circle cx="12" cy="12" r="2.800" fill="#343735" />
    </>
  ),
  trowel: (
    <>
      <path d="M23 1l-9 9" stroke="#9b9e9c" strokeWidth="2" />
      <path d="M0 19c4-8 9-9 15-9 1 7-5 11-15 9z" fill="#b7bab8" />
      {corner}
    </>
  ),
  objMerge: (
    <>
      <path d="M0 1h14v14H0z" fill="#b9bcbb" />
      <path d="M7 8h15v14H7z" fill="#dddfde" stroke="#6d706e" strokeWidth=".8" />
      <path d="M10 1h5v7h4l-7 6-7-6h5z" fill="#d2281c" />
      <path d="M10 14h8v5l-4 2-4-2z" fill="#8a96a8" />
    </>
  ),
  jump: <path d="M1 16C3 6 12 4 18 11l4-3v13l-12-1 4-4C10 11 5 11 1 16z" fill="#dcdddc" />,
  picker: (
    <>
      <path d="M8 0h8v3h-3v3h11v7H0V6h11V3H8z" fill="#c7c9c8" />
      <path d="M13 8v14l4-3 2 4 3-1-2-4h4z" fill="#101210" stroke="#f4f4f4" strokeWidth="1.300" />
    </>
  ),
  // playbar
  first: <path d="M1 3h3v18H1zM14 3v18L5 12zM23 3v18l-9-9z" fill="#dcdddc" />,
  playBack: <path d="M19 2v20L4 12z" fill="#dcdddc" />,
  stop: <path d="M3 2h18v20H3z" fill="#e9eae9" />,
  play: <path d="M5 2v20l15-10z" fill="#dcdddc" />,
  last: <path d="M20 3h3v18h-3zM1 3v18l9-9zM10 3v18l9-9z" fill="#dcdddc" />,
  prevKey: <path d="M13 4v16L2 12zM16 4h3v16h-3z" fill="#dcdddc" />,
  nextKey: <path d="M11 4v16l11-8zM5 4h3v16H5z" fill="#dcdddc" />,
  pageCursor: (
    <>
      <path d="M4 3h16v14H4z" fill="#e4e5e4" />
      <path d="M4 3h16v3H4z" fill="#8e918f" />
      <path d="M12 7v15l4-3 2 4 3-1-2-4h5z" fill="#111" stroke="#fff" strokeWidth="1.100" />
    </>
  ),
  speaker: (
    <>
      <path d="M1 8h4l4-3v14l-4-3H1z" fill="#6f7371" stroke="#e8e9e8" />
      <path d="M9 2c6 3 6 17 0 20-3-6-3-14 0-20z" fill="#2f3230" stroke="#e8e9e8" strokeWidth="1.300" />
      <path d="M17 5c3 4 3 10 0 14M20 3c4 5 4 13 0 18" fill="none" stroke="#dcdddc" strokeWidth="1.500" />
    </>
  ),
  loop: (
    <>
      <path d="M5 8h8c9 0 10 9 6 11H4" fill="none" stroke="#f2f2f2" strokeWidth="2.600" />
      <path d="M10 1v13L1 8z" fill="#f2f2f2" />
    </>
  ),
  clock: (
    <>
      <circle cx="12" cy="12" r="9.500" fill="none" stroke="#f3f4f4" strokeWidth="2.200" />
      <path d="M12 6v10M12 11h5" stroke="#f3f4f4" strokeWidth="2.200" />
    </>
  ),
  ticksSet: <path d="M2 4v16M7 4v6M12 4v11M17 4v6M22 4v16" stroke="#9a9d9b" strokeWidth="1.500" />,
  channel: (
    <>
      <path d="M1 16h22" stroke="#a7aaa8" strokeWidth="1.500" />
      <circle cx="13" cy="16" r="3.500" fill="#eef0ef" />
      <path d="M8 3v7L3 6zM16 3v7l5-4z" fill="none" stroke="#7a7d7b" />
    </>
  ),
  stepBack: <path d="M5 3h2v18H5zM19 4v16L9 12z" fill="#54574f" />,
  stepFwd: <path d="M17 3h2v18h-2zM5 4v16l10-8z" fill="#54574f" />,
  key: (
    <>
      <circle cx="15" cy="6" r="4.500" fill="none" stroke="#7d807e" strokeWidth="2.600" />
      <path d="M13 10L5 22M8 17l4 3M6 20l3 2" stroke="#7d807e" strokeWidth="2.400" />
    </>
  ),
  scopedKeys: (
    <>
      <path d="M2 2h8v20H2z" fill="#c9cbca" />
      <path d="M2 7h8M2 17h8" stroke="#4a6c3a" strokeWidth="2.500" />
      <path d="M2 12h8" stroke="#a8382c" strokeWidth="2.500" />
      <path d="M21 8c-3-5-10-3-10 3M11 15c2 6 10 5 10-2M21 3v6h-6M11 21v-6h6" fill="none" stroke="#f1f1f1" strokeWidth="2.400" />
    </>
  ),
  graph: (
    <>
      <path d="M0 0h24v24H0z" fill="#0b0c10" />
      <path d="M1 13c5 9 6 5 9-2s6-8 6 1 3 4 7-1" fill="none" stroke="#d8893b" strokeWidth="1.600" />
      <path d="M1 12h22" stroke="#e3e3e3" strokeWidth="1.400" />
      <path d="M4 16c4 5 6-12 9-10s3 14 7 9" fill="none" stroke="#6f9be0" strokeWidth="1.300" />
    </>
  ),
  brain: (
    <>
      <path d="M12 2c7-1 11 5 9 11-1 4-4 5-7 5l1 4-4-3c-6 0-9-4-8-9 0-4 4-7 9-8z" fill="#cfd1d0" />
      <path d="M8 7c3-1 4 2 2 4M13 5c4 1 3 4 1 6M6 12c3 0 5 2 4 5M15 13c2-1 4 0 4 2" fill="none" stroke="#777a78" strokeWidth="1.300" />
    </>
  ),
  refresh: <path d="M20 9C17 1 6 2 4 10M4 15c3 8 14 7 16-1M21 3v7h-7M3 21v-7h7" fill="none" stroke="#5f6260" strokeWidth="2.800" />,
};

const Icon = ({ name, className = "size-5" }: { name: string; className?: string }) => (
  <svg viewBox="0 0 24 24" className={`shrink-0 ${className}`} aria-hidden="true">
    {glyphs[name]}
  </svg>
);

const IconButton = ({ name, label, className = "", size = "size-5" }: { name: string; label: string; className?: string; size?: string }) => (
  <button type="button" aria-label={label} className={`flex shrink-0 items-center justify-center ${className}`}>
    <Icon name={name} className={size} />
  </button>
);

const Caret = ({ className = "" }: { className?: string }) => (
  <svg viewBox="0 0 8 6" className={`h-[5px] w-[7px] shrink-0 ${className}`} aria-hidden="true">
    <path d="M0 0h8L4 6z" fill="currentColor" />
  </svg>
);

const UpDown = ({ className = "text-[#8b8e8c]" }: { className?: string }) => (
  <svg viewBox="0 0 8 14" className={`h-[13px] w-[6px] ${className}`} aria-hidden="true">
    <path d="M4 0l4 6H0zM4 14l4-6H0z" fill="currentColor" />
  </svg>
);

const Plus = ({ className = "size-[9px]" }: { className?: string }) => (
  <svg viewBox="0 0 10 10" className={`shrink-0 ${className}`} aria-hidden="true">
    <path d="M5 0v10M0 5h10" stroke="#f0f1f0" strokeWidth="2" />
  </svg>
);

/* ---------- top of the window ---------- */

const TitleBar = () => (
  <header className="flex h-[17px] shrink-0 items-center bg-[#627087] text-[#eef1f5]">
    <Icon name="houdini" className="ml-px mr-[2px] size-[13px]" />
    <h1 className="font-[Roboto,sans-serif] text-[9px] leading-[16px] whitespace-nowrap">
      T:/PROJECTS/HoudiniSchool_bubblize/hip/HS242_Teacher_Files/HS242_SolverMadness_01_Teacher_v02.hiplc - Houdini Indie
      Limited-Commercial 20.5.278 - Py3.11
    </h1>
    <div className="ml-auto flex items-center gap-[26px] pr-[14px]">
      <button type="button" aria-label="Minimize">
        <svg viewBox="0 0 9 9" className="size-[9px]"><path d="M0 5h9" stroke="currentColor" /></svg>
      </button>
      <button type="button" aria-label="Restore">
        <svg viewBox="0 0 9 9" className="size-[9px]">
          <path d="M.5 2.500h6v6h-6zM2.500 2.500v-2h6v6h-2" fill="none" stroke="currentColor" />
        </svg>
      </button>
      <button type="button" aria-label="Close">
        <svg viewBox="0 0 9 9" className="size-[9px]"><path d="M.5.5l8 8M8.500.5l-8 8" stroke="currentColor" /></svg>
      </button>
    </div>
  </header>
);

const TopSelect = ({ icon, value, label, className }: { icon: string; value: string; label: string; className: string }) => (
  <div className={`relative flex h-[24px] items-center ${className}`}>
    <Icon name={icon} className="pointer-events-none absolute left-[3px] size-[18px]" />
    <select
      aria-label={label}
      className="h-full w-full appearance-none bg-linear-to-b from-[#454846] to-[#3a3d3b] pl-[25px] text-[12px] text-[#d6d8d7]"
    >
      <option>{value}</option>
    </select>
    <span className="pointer-events-none absolute right-0 flex h-full w-[11px] items-center justify-center bg-[#2a2d2b]">
      <UpDown />
    </span>
  </div>
);

const MenuBar = () => (
  <div className="flex h-[26px] shrink-0 items-center bg-linear-to-b from-[#2d302e] to-[#343735] text-[12px] text-[#dddfde]">
    <span className="flex h-full w-[9px] justify-center border-r border-black bg-[#3b3e3c] pt-[2px] text-black">
      <Caret className="rotate-180" />
    </span>
    <nav className="flex w-[307px] gap-[9px] pl-[7px] leading-[22px]">
      {["File", "Edit", "Render", "Assets", "Windows", "Labs", "Help"].map((m) => (
        <button key={m} type="button">{m}</button>
      ))}
    </nav>
    <TopSelect icon="layout" value="DemoWS" label="Desktop" className="w-[127px]" />
    <TopSelect icon="radial" value="Main" label="Radial menu" className="ml-[10px] w-[127px]" />
    <TopSelect icon="clapper" value="Main" label="Take" className="ml-auto w-[170px]" />
    <IconButton name="help" label="Help" size="size-[18px]" className="mr-[8px] ml-[8px]" />
  </div>
);

type ShelfTab = [string, string];
type ShelfTool = [string, string, string];

const createTabs: ShelfTab[] = [
  ["Create", "w-[43px]"], ["Modify", "w-[43px]"], ["Model", "w-[40px]"], ["Polygon", "w-[49px]"], ["Deform", "w-[45px]"],
  ["Texture", "w-[47px]"], ["Rigging", "w-[45px]"], ["Characters", "w-[59px]"], ["Constraints", "w-[62px]"],
  ["Hair Utils", "w-[53px]"], ["Guide Process", "w-[72px]"], ["Terrain FX", "w-[56px]"], ["Simple FX", "w-[55px]"],
  ["Volume", "w-[46px]"],
];

const createTools: ShelfTool[] = [
  ["box", "Box", "w-[41px]"], ["sphere", "Sphere", "w-[41px]"], ["tube", "Tube", "w-[41px]"], ["torus", "Torus", "w-[41px]"],
  ["grid", "Grid", "w-[41px]"], ["null", "Null", "w-[41px]"], ["line", "Line", "w-[41px]"], ["circle", "Circle", "w-[41px]"],
  ["bezier", "Curve Bezier", "w-[58px]"], ["draw", "Draw Curve", "w-[57px]"], ["path", "Path", "w-[39px]"],
  ["spray", "Spray Paint", "w-[58px]"], ["font", "Font", "w-[38px]"], ["platonic", "Platonic|Solids", "w-[70px]"],
  ["lsystem", "L-System", "w-[43px]"], ["metaball", "Metaball", "w-[46px]"], ["file", "File", "w-[40px]"],
  ["spiral", "Spiral", "w-[42px]"], ["helix", "Helix", "w-[41px]"], ["quick", "Quick Shapes", "w-[62px]"],
];

const lightTabs: ShelfTab[] = [
  ["Lights and Cameras", "w-[94px]"], ["Collisions", "w-[54px]"], ["Particles", "w-[50px]"], ["Grains", "w-[42px]"],
  ["Vellum", "w-[43px]"], ["Rigid Bodies", "w-[65px]"], ["Particle Fluids", "w-[72px]"], ["Viscous Fluids", "w-[72px]"],
  ["Oceans", "w-[45px]"], ["Pyro FX", "w-[46px]"], ["FEM", "w-[33px]"], ["Wires", "w-[38px]"], ["Crowds", "w-[46px]"],
  ["Drive Simulation", "w-[82px]"],
];

const lightTools: ShelfTool[] = [
  ["camera", "Camera", "w-[52px]"], ["pointLight", "Point Light", "w-[44px]"], ["spotLight", "Spot Light", "w-[58px]"],
  ["areaLight", "Area Light", "w-[42px]"], ["geoLight", "Geometry|Light", "w-[76px]"], ["volumeLight", "Volume Light", "w-[52px]"],
  ["distantLight", "Distant Light", "w-[68px]"], ["envLight", "Environment|Light", "w-[60px]"], ["skyLight", "Sky Light", "w-[52px]"],
  ["giLight", "GI Light", "w-[34px]"], ["causticLight", "Caustic|Light", "w-[68px]"], ["portalLight", "Portal Light", "w-[48px]"],
  ["ambientLight", "Ambient Light", "w-[74px]"], ["stereoCam", "Stereo|Camera", "w-[58px]"], ["vrCam", "VR Camera", "w-[60px]"],
  ["switcher", "Switcher", "w-[38px]"], ["gamepad", "Gam|Car", "w-[54px]"],
];

const Shelf = ({ tabs, tools, pad }: { tabs: ShelfTab[]; tools: ShelfTool[]; pad: string }) => (
  <section className="flex min-w-0 flex-col bg-[#2a2d2b]">
    <div role="tablist" className="flex h-[18px] items-stretch text-[9px] text-[#c9cbca]">
      {tabs.map(([name, width], i) => (
        <button
          key={name}
          type="button"
          role="tab"
          aria-selected={i === 0}
          className={`shrink-0 border-r border-black leading-[18px] whitespace-nowrap ${i === 0 ? "bg-[#434644]" : "border-b bg-[#2e312f]"} ${width}`}
        >
          {name}
        </button>
      ))}
      <button type="button" aria-label="Add shelf" className="ml-[9px]"><Plus className="size-[10px]" /></button>
      <button type="button" aria-label="Shelf menu" className="mr-[5px] ml-auto text-[#e6e7e6]"><Caret /></button>
    </div>
    <div className="flex h-[39px] bg-linear-to-b from-[#434644] to-[#343735]">
      <div className={`flex min-w-0 flex-1 overflow-x-clip ${pad}`}>
        {tools.map(([icon, name, width]) => {
          const lines = name.split("|");
          return (
            <button
              key={name}
              type="button"
              className={`flex h-full shrink-0 flex-col items-center justify-between pt-[2px] ${lines.length > 1 ? "" : "pb-[3px]"} ${width}`}
            >
              <Icon name={icon} className="-mb-[6px] size-[21px]" />
              <span className="text-[9px] leading-[9px] whitespace-nowrap text-[#c6c8c7]">
                {lines.map((l) => <span key={l} className="block text-center">{l}</span>)}
              </span>
            </button>
          );
        })}
      </div>
      <button type="button" aria-label="More tools" className="mr-[6px] w-[7px] text-[#8b8e8c]">
        <Caret className="-rotate-90" />
      </button>
    </div>
  </section>
);

/* ---------- pane chrome ---------- */

type PaneTab = [string, string];

const PaneTabs = ({ tabs, active }: { tabs: PaneTab[]; active: number }) => (
  <div role="tablist" className="flex h-[20px] shrink-0 items-stretch bg-[#252826] text-[10px] text-[#c9cbca]">
    {tabs.map(([name, width], i) => (
      <div
        key={name}
        className={`flex shrink-0 items-center justify-between border-r border-black pr-[6px] pl-[7px] ${i === active ? "bg-[#454846]" : "bg-[#2e312f]"} ${width}`}
      >
        <button type="button" role="tab" aria-selected={i === active} className={`leading-[20px] whitespace-nowrap ${name[0] === "/" ? "italic" : ""}`}>
          {name}
        </button>
        <button type="button" aria-label={`Close ${name}`}>
          <svg viewBox="0 0 8 8" className="size-[6px]"><path d="M1 1l6 6M7 1L1 7" stroke="#f0f1f0" strokeWidth="2.200" /></svg>
        </button>
      </div>
    ))}
    <button type="button" aria-label="New tab" className="ml-[6px]"><Plus className="size-[10px]" /></button>
    <button type="button" aria-label="Maximize pane" className="mr-[10px] ml-auto">
      <span className="block h-[9px] w-[11px] bg-[#d6d8d7]" />
    </button>
    <button type="button" aria-label="Pane menu" className="mr-[5px] text-[#e6e7e6]"><Caret /></button>
  </div>
);

const PathBar = ({ back, children }: { back: string; children: ReactNode }) => (
  <div className="flex h-[33px] shrink-0 items-center border-t border-[#555856] bg-[#3c3f3d]">
    <IconButton name="arrowL" label="Back" size="size-[18px]" className={`ml-[4px] ${back}`} />
    <IconButton name="arrowR" label="Forward" size="size-[18px]" className="mr-[8px] ml-[6px] text-[#5d605e]" />
    <nav aria-label="Node path" className="flex h-[25px] min-w-0 flex-1 items-center border border-black bg-[#353836] pl-[4px] text-[11px] text-[#dddfde]">
      <Icon name="clapper" className="size-[20px]" />
      <a href="#obj" className="ml-[2px] leading-[20px]">obj</a>
      <svg viewBox="0 0 8 25" className="mx-[3px] h-[23px] w-[7px]"><path d="M1 0l6 12.500L1 25" fill="none" stroke="#191b1a" /></svg>
      <Icon name="shapes" className="size-[20px]" />
      <a href="#growth_source" className="ml-[3px] leading-[20px]">growth_source</a>
      <span className="ml-auto flex h-full w-[10px] items-center justify-center bg-[#2a2d2b] text-[#9a9d9b]"><Caret /></span>
    </nav>
    {children}
  </div>
);

/* ---------- scene view ---------- */

const W = 1004;
const H = 798;

const gridRows = Array.from({ length: 90 }, (_, i) => {
  const y = 1 / (1 / 1290 + i * 0.0000105) - 586;
  return { y, major: i % 5 === 0 };
}).filter((r) => r.y > -10);

const gridCols = Array.from({ length: 141 }, (_, i) => ({ x: 510 + (i - 70) * 20, major: i % 5 === 0 }));

const Scene = () => (
  <svg viewBox={`0 0 ${W} ${H}`} preserveAspectRatio="xMidYMid slice" className="absolute inset-0 h-full w-full" role="img" aria-label="Cocktail glass model">
    <defs>
      <linearGradient id="ground" x1="0" y1="0" x2="0" y2="1">
        <stop offset="0" stopColor="#4d504e" />
        <stop offset=".5" stopColor="#434644" />
        <stop offset="1" stopColor="#353736" />
      </linearGradient>
      <linearGradient id="bowlIn" x1="0" y1="0" x2="1" y2="0">
        <stop offset="0" stopColor="#a9a9a7" />
        <stop offset=".36" stopColor="#a3a3a1" />
        <stop offset=".44" stopColor="#b4b4b2" />
        <stop offset=".52" stopColor="#9a9a99" />
        <stop offset="1" stopColor="#a2a2a1" />
      </linearGradient>
      <linearGradient id="bowlOut" x1="0" y1="0" x2="1" y2="0">
        <stop offset="0" stopColor="#000" />
        <stop offset=".4" stopColor="#000" />
        <stop offset=".5" stopColor="#2c2c2c" />
        <stop offset=".7" stopColor="#505050" />
        <stop offset="1" stopColor="#6d6d6d" />
      </linearGradient>
      <linearGradient id="stem" x1="0" y1="0" x2="1" y2="0">
        <stop offset="0" stopColor="#000" />
        <stop offset=".12" stopColor="#101010" />
        <stop offset=".3" stopColor="#848484" />
        <stop offset="1" stopColor="#949494" />
      </linearGradient>
      <linearGradient id="foot" x1="0" y1="0" x2="1" y2="1">
        <stop offset="0" stopColor="#9a9a9a" />
        <stop offset="1" stopColor="#a6a6a6" />
      </linearGradient>
      <radialGradient id="knob" cx=".55" cy=".5" r=".55">
        <stop offset="0" stopColor="#bdbdbd" />
        <stop offset="1" stopColor="#9a9a9a" />
      </radialGradient>
    </defs>
    <rect width={W} height={H} fill="url(#ground)" />
    <g stroke="#6a6d6b">
      {gridRows.map((r) => <path key={r.y} d={`M0 ${r.y}L${W} ${r.y - 12}`} strokeOpacity={r.major ? 0.5 : 0.25} />)}
      {gridCols.map((c) => <path key={c.x} d={`M${c.x + (c.x - 510) * 0.06} ${H}L${510 + (c.x - 510) * 0.56} 0`} strokeOpacity={c.major ? 0.35 : 0.16} />)}
    </g>
    <path d={`M0 596L${W} 582M0 648L${W} 634`} stroke="#7d3c3c" strokeOpacity=".3" />
    <ellipse cx="472" cy="584" rx="156" ry="108" fill="url(#foot)" />
    <path d="M317 590c8 136 302 136 310 0-12 130-298 130-310 0z" fill="#b3b3b3" />
    <ellipse cx="468" cy="550" rx="26" ry="17" fill="url(#knob)" />
    <path d="M440 552c8-8 12-14 12-30h14v28c-8 6-18 8-26 2z" fill="#777" opacity=".7" />
    <path d="M451 340h34v190c0 12 3 16 8 20-10 10-38 8-40-4-3-8-2-20-2-30z" fill="url(#stem)" />
    <path d="M199 140L447 356c4 8 34 6 40-2L716 154z" fill="url(#bowlOut)" />
    <ellipse cx="462" cy="118" rx="265" ry="99" fill="#adadac" />
    <ellipse cx="461" cy="115" rx="258" ry="93" fill="url(#bowlIn)" />
    <path d="M719 118c-6 50-110 88-258 90" fill="none" stroke="#bcbcbb" strokeWidth="2" />
  </svg>
);

type Tool = [string, string, boolean?];

const leftTools: Tool[] = [
  ["cursor", "Select"], ["lock", "Secure selection", true], ["move", "Move"], ["rotate", "Rotate"], ["scale", "Scale"],
  ["pose", "Pose"], ["handles", "Handles"],
];
const snapTools: Tool[] = [["snapGrid", "Snap to grid"], ["snapCurve", "Snap to curve"], ["snapPoint", "Snap to point"], ["snapMulti", "Multi snap"]];
const viewTools: Tool[] = [["movieCam", "View tool", true], ["renderRegion", "Render region"], ["lens", "Lens"]];

const ToolList = ({ tools, cell }: { tools: Tool[]; cell: string }) => (
  <>
    {tools.map(([icon, label, on]) => (
      <IconButton key={label} name={icon} label={label} size="size-[22px]" className={`${cell} ${on ? "bg-[#566b8f]" : ""}`} />
    ))}
  </>
);

const displayTools: Tool[] = [
  ["plane", "Construction plane", true], ["plane2", "Reference plane"], ["padlock", "Lock camera"], ["noLight", "No lighting"],
  ["headlight", "Headlight", true], ["lampYellow", "Normal lighting"], ["lampWhite", "High quality lighting"],
  ["checkerCube", "Materials", true], ["ghost", "Ghost other objects"], ["ghostPlay", "Display other objects"],
];
const markerTools: Tool[] = [
  ["pt", "Points"], ["ptNormal", "Point normals"], ["ptTrail", "Point trails"], ["ptNum", "Point numbers"],
  ["primNormal", "Primitive normals"], ["primNum", "Primitive numbers"], ["hull", "Hulls"], ["shadePlane", "Shading", true],
  ["checker", "Textures", true], ["bluePlane", "Floor"], ["greenCage", "Cage"], ["axisBall", "Origin gnomon"],
  ["groupList", "Group list"], ["picture", "Background image", true],
];

const SceneView = () => (
  <section className="flex min-h-0 min-w-0 flex-col border-l-[6px] border-[#3e4147] bg-[#343735]">
    <PaneTabs
      active={5}
      tabs={[
        ["Animation Editor", "w-[107px]"], ["Render View", "w-[89px]"], ["Composite View", "w-[103px]"],
        ["Motion FX View", "w-[99px]"], ["Geometry Spreadsheet", "w-[131px]"], ["Scene View", "w-[85px]"],
      ]}
    />
    <PathBar back="text-[#5d605e]">
      <IconButton name="pin" label="Pin" size="size-[18px]" className="ml-[9px]" />
      <IconButton name="target" label="Follow selection" className="ml-[4px]" />
      <IconButton name="cube" label="Object display" size="size-[22px]" className="ml-[14px]" />
      <IconButton name="blueDot" label="Shading" size="size-[18px]" className="ml-[6px]" />
      <button type="button" aria-label="Snapshot" className="mr-[4px] ml-[2px] size-[19px] bg-[#dcdddc]" />
    </PathBar>
    <div className="flex h-[33px] shrink-0 items-center border-t border-b border-black bg-[#272b28]">
      <span className="flex h-full w-[10px] justify-center border-r border-black bg-[#3b3e3c] pt-[2px] text-black"><Caret className="rotate-180" /></span>
      <IconButton name="dots" label="Tool options" className="ml-[4px]" />
      <div className="ml-[370px] flex items-center">
        <IconButton name="lasso" label="Lasso" className="w-[34px]" />
        <IconButton name="brushSel" label="Brush" className="w-[32px]" />
        <IconButton name="laserSel" label="Laser" className="mr-[4px] w-[33px]" />
        <IconButton name="camSet" label="View" className="h-[23px] w-[22px] bg-[#566b8f]" />
        <IconButton name="viewBox" label="Frame" size="size-[18px]" className="ml-[4px] w-[20px]" />
        <IconButton name="stopRed" label="Disable" className="ml-[13px] w-[20px]" />
        <IconButton name="heliCam" label="Fly camera" size="size-[22px]" className="ml-[12px] w-[22px]" />
        <IconButton name="gearBox" label="View options" size="size-[17px]" className="ml-[4px] w-[18px]" />
      </div>
      <IconButton name="people" label="Viewport layout" className="mr-[4px] ml-auto" />
      <IconButton name="help" label="Help" size="size-[18px]" className="mr-[5px]" />
    </div>

    <div className="flex min-h-0 flex-1">
      <aside className="flex w-[35px] shrink-0 flex-col items-center bg-[#363937]">
        <span className="mb-[7px] h-[9px] w-full border-b border-black bg-[#3e413f] pl-[2px] text-black"><Caret className="rotate-90" /></span>
        <div className="flex flex-col border border-black">
          <IconButton name="primitives" label="Objects" className="h-[24px] w-[25px]" />
          <IconButton name="diamonds" label="Components" className="h-[24px] w-[25px] bg-[#566b8f]" />
          <IconButton name="goldCube" label="Dynamics" className="h-[24px] w-[25px]" />
        </div>
        <div className="mt-[10px] flex flex-col"><ToolList tools={leftTools} cell="h-[28px] w-[26px]" /></div>
        <div className="mt-[8px] flex flex-col"><ToolList tools={snapTools} cell="h-[28px] w-[26px]" /></div>
        <div className="mt-[8px] flex flex-col"><ToolList tools={viewTools} cell="h-[28px] w-[26px]" /></div>
        <div className="mt-auto mb-[4px] flex flex-col">
          <IconButton name="hand" label="Pick" className="h-[25px] w-[26px]" />
          <IconButton name="reel" label="Flipbook" className="h-[25px] w-[26px]" />
        </div>
      </aside>

      <div className="relative min-w-0 flex-1 overflow-hidden">
        <Scene />
        <div className="absolute top-[5px] right-0 left-[7px] flex items-center">
          <Icon name="movieCam" className="size-[25px]" />
          <h2 className="ml-[9px] text-[14px] leading-[20px] font-bold text-white">View</h2>
          <div className="mr-[5px] ml-auto flex gap-[4px] text-[11px] leading-[15px] text-[#d0d2d1]">
            <button type="button" className="w-[48px] rounded-full border border-[#8b8e8c] bg-[#2f3230]">Persp -</button>
            <button type="button" className="w-[58px] rounded-full border border-[#8b8e8c] bg-[#2f3230]">No cam -</button>
          </div>
        </div>
        <div className="absolute top-[61px] left-[9px] font-bold text-white/20">
          <p className="text-[45px] leading-[54px]">更多海外优质教程</p>
          <p className='pl-[3px] font-["Noto_Sans",sans-serif] text-[45px] leading-[50px]'>www.cgltg.com</p>
        </div>
        <p className="absolute bottom-[31px] left-[437px] text-[11px] leading-[18px] text-[#d0d2d1]">Toggle Wireframe/Shaded</p>
        <p className="absolute bottom-[7px] left-[14px] text-[11px] leading-[18px] whitespace-nowrap text-[#e0e2e1]">
          Left mouse tumbles. Middle pans. Right dollies. Ctrl+Alt+Left box-zooms. Ctrl+Right zooms. Spacebar-Ctrl-Left tilts. Hold L for
          alternate tumble, dolly, and zoom. M or Alt+M for First Person Navigation.
        </p>
      </div>

      <aside className="flex w-[25px] shrink-0 flex-col items-center bg-[#343735]">
        <span className="mb-[3px] h-[9px] w-full border-b border-black bg-[#3e413f] pl-[18px] text-black"><Caret className="-rotate-90" /></span>
        <ToolList tools={displayTools} cell="h-[25px] w-[23px]" />
        <div className="mt-[3px] flex flex-col"><ToolList tools={markerTools} cell="h-[25px] w-[23px]" /></div>
        <IconButton name="mapPin" label="Markers" size="size-[22px]" className="mt-[10px] h-[25px] w-[23px] bg-[#566b8f]" />
        <div className="mt-auto mb-px flex flex-col">
          <IconButton name="info" label="Info" className="h-[25px] w-[23px]" />
          <IconButton name="barrel" label="Performance" className="h-[25px] w-[23px]" />
          <IconButton name="eye" label="Visualizers" className="h-[25px] w-[23px]" />
        </div>
      </aside>
    </div>
  </section>
);

/* ---------- network ---------- */

type NodeShape = "plain" | "trapezoid" | "flipped" | "wave" | "merge" | "cross";

type NetNode = {
  name: string;
  x: number;
  y: number;
  shape: NodeShape;
  fill?: string;
  inputs?: number[];
  type?: string;
  note?: string;
  badges?: string[];
  art?: ReactNode;
  labelX?: number;
  noteGap?: string;
};

const vdb = (
  <>
    <path d="M0-4c-3-4-7-3-7 0s4 4 7 0c3-4 7-3 7 0s-4 4-7 0z" fill="none" stroke="#c03434" strokeWidth="2" />
    <path d="M-6 2l2 5 2-5M0 2v5h1c2 0 2-5 0-5zM5 2v5h2M5 2h2M5 4.500h2" fill="none" stroke="#7a4a46" strokeWidth="1.200" />
  </>
);
const wrangle = (
  <>
    <path d="M-7-3c3-4 8-5 12-2l2 3-5 3-8-1z" fill="#a8921e" />
    <path d="M-3 1l7-2 2 3-6 3-4 1z" fill="#171814" />
    <path d="M-2 4l5-1 4 1-3 4-4-2z" fill="#f1f1ec" />
  </>
);
const noise = (
  <>
    <path d="M-4-8h10v9H-4z" fill="#dde2e4" stroke="#444a52" strokeWidth=".8" />
    <path d="M-2-5h6M-2-2h5" stroke="#5b6a60" />
    <path d="M-1 1l-5 5" stroke="#2d3138" strokeWidth="1.500" />
    <circle cx="-5" cy="5" r="2" fill="#f2f2f2" />
  </>
);

const nodes: NetNode[] = [
  {
    name: "object_merge1", x: 201, y: 162, shape: "flipped", note: "/obj/model_cocktail_glass/OUT", labelX: 38, noteGap: "mt-[3px]",
    art: (
      <>
        <path d="M-5-6h11V7H-5z" fill="#e8e9e8" stroke="#555" strokeWidth=".8" />
        <path d="M0-7h3v4h3l-5 5-4-5h3z" fill="#cf2a1e" />
        <path d="M-2 2h6v3H-2z" fill="#7a8494" />
      </>
    ),
  },
  { name: "vdbfrompolygons1", x: 54, y: 272, shape: "trapezoid", inputs: [-10, 10], art: vdb, labelX: 37 },
  { name: "vdbreshapesdf2", x: 54, y: 320, shape: "plain", inputs: [-12, 12], art: vdb, labelX: 36 },
  { name: "GLASS_VDB", x: 54, y: 380, shape: "cross", type: "Null", fill: "#a9bfd6", labelX: 26 },
  {
    name: "pointsfromvolume1", x: 282, y: 272, shape: "plain", inputs: [0], badges: ["smallLock"],
    art: <circle r="7" fill="#cfc16a" stroke="#a69a4a" strokeDasharray="1 1" />,
  },
  {
    name: "group1", x: 354, y: 342, shape: "plain", inputs: [-12, 12], note: "start", noteGap: "mt-[3px]",
    art: <circle r="7" fill="#f2eee6" stroke="#d08c35" strokeWidth="1.500" />,
  },
  { name: "set_infect", x: 193, y: 380, shape: "wave", inputs: [-18, -6, 6, 18], type: "Attribute Wrangle", badges: ["smallLock"], art: wrangle },
  { name: "set_infect1", x: 354, y: 394, shape: "wave", inputs: [-18, -6, 6, 18], type: "Attribute Wrangle", badges: ["smallLock"], art: wrangle },
  {
    name: "merge1", x: 282, y: 461, shape: "merge",
    art: (
      <>
        <path d="M-6-6l9 5-7 7" fill="none" stroke="#f8f8f8" strokeWidth="2" />
        <path d="M-4-6l3 3M2 3l-3 2M-2 0h8" stroke="#9c2430" strokeWidth="2" />
        <path d="M0-1l6-2M-6 7l4-2" stroke="#555" />
      </>
    ),
  },
  { name: "attribnoise1", x: 282, y: 518, shape: "plain", inputs: [0], fill: "#7480b8", note: "Cd", badges: ["smallLock"], art: noise },
  { name: "attribnoise2", x: 282, y: 574, shape: "plain", inputs: [0], fill: "#7480b8", note: "Cd", badges: ["smallLock"], art: noise },
  { name: "noise_attr", x: 282, y: 638, shape: "wave", inputs: [-18, -6, 6, 18], fill: "#ef4c3c", type: "Attribute Wrangle", badges: ["smallLock"], art: wrangle },
  {
    name: "point_based_growth", x: 282, y: 694, shape: "plain", inputs: [-18, -6, 6, 18], fill: "#a3d184", type: "Solver",
    badges: ["tent", "clockY", "smallLock"],
    art: (
      <>
        <circle cx="-1" cy="-2" r="6" fill="#e79a8c" />
        <path d="M-5-3c2-3 3 2 5-1s4 0 4 2" stroke="#a8483c" fill="none" />
        <circle cx="4" cy="4" r="3" fill="#9c3526" />
        <circle cx="0" cy="6" r="2.500" fill="#e9c832" />
      </>
    ),
  },
  { name: "velocity_attr", x: 282, y: 757, shape: "wave", inputs: [-18, -6, 6, 18], fill: "#ef4c3c", type: "Attribute Wrangle", badges: ["clockY", "smallLock"], art: wrangle },
  { name: "", x: 282, y: 809, shape: "cross", type: "Null", fill: "#8d9cb0", labelX: 26 },
];

const wires = [
  "M201 178C200 191 192 194 180 198L62 241C48 247 44 251 43 258",
  "M201 178C203 190 211 195 219 202L270 240C279 247 282 251 282 258",
  "M54 286L42 307",
  "M54 334V361",
  "M282 287C281 301 274 304 262 309L192 345C180 351 176 356 175 364",
  "M282 287C284 303 291 307 302 309L325 313C337 316 341 321 341 328",
  "M354 356L336 377",
  "M193 396C193 408 202 413 212 416L250 429C264 433 269 437 272 444",
  "M354 410C352 424 344 426 332 427L313 429C300 430 294 436 291 444",
  "M282 479V504",
  "M282 532V560",
  "M282 588L264 622",
  "M282 653L264 680",
  "M282 708L264 740",
  "M282 772V790",
];

const bodies: Record<NodeShape, string> = {
  plain: "M-28-9h56a2 2 0 0 1 2 2v14a2 2 0 0 1-2 2h-56a2 2 0 0 1-2-2v-14a2 2 0 0 1 2-2z",
  trapezoid: "M-24-9h47q2 0 3 2l6 16h-64l5-16q1-2 3-2z",
  flipped: "M-31-10h62q2 0 1 3l-6 15q-1 2-3 2h-46q-2 0-3-2l-6-15q-1-3 1-3z",
  wave: "M-30-9C-14-16 14-4 30-8V11C14 16-14 4-30 11z",
  merge: "M-22-9C-10-11 10-11 22-9 33-7 33 8 22 9 10 12-10 12-22 9-33 8-33-7-22-9z",
  cross: "",
};

const waveLift = [-4, -3, -1, 0];

const NodeShapeArt = ({ n }: { n: NetNode }) => {
  const fill = n.fill ?? "#ccd0cc";
  const out = n.shape === "merge" ? 17 : n.shape === "wave" ? 15 : n.shape === "cross" ? 20 : 14;
  return (
    <g transform={`translate(${n.x} ${n.y})`}>
      {n.shape === "flipped" && (
        <>
          <circle r="31" fill="#44659f" />
          <circle r="22" fill="#8f74c2" />
        </>
      )}
      {n.name === "point_based_growth" && <path d="M-26 12h58v-16" fill="none" stroke="#c3e6ac" strokeWidth="2" />}
      {n.shape === "merge" && <path d="M-24-12c0-9 48-9 48 0z" fill="#a9adaa" />}
      {n.shape === "cross" ? (
        <>
          <g fill={fill}>
            <rect x="-26" y="-7" width="52" height="14" rx="5" transform="rotate(42)" />
            <rect x="-26" y="-7" width="52" height="14" rx="5" transform="rotate(-42)" />
          </g>
          <path d="M-15-5l-6-7M-15 5l-6 7M15-5l6-7M15 5l6 7" stroke="#6f859c" strokeWidth=".8" />
          <circle r="6" fill="#b9cde2" stroke="#dbe6f1" strokeDasharray="1 1" />
        </>
      ) : (
        <>
          <path d={bodies[n.shape]} fill={fill} stroke={n.shape === "flipped" ? "#e6d35c" : "none"} strokeWidth="2" />
          <path d="M-21-7l-3 14M-13-7l-3 14M17-7l-3 14M24-7l-3 14" stroke="#000" strokeOpacity=".35" strokeWidth=".8" />
          {n.shape === "flipped" && <path d="M23-9h8l-6 17h-5z" fill="#2298e8" />}
        </>
      )}
      {n.art}
      <g fill="#b8bbb9">
        {n.inputs?.map((dx, i) => <circle key={dx} cx={dx} cy={n.shape === "wave" ? -12 + waveLift[i] : -14} r="2.800" />)}
        {n.shape === "cross" && <circle cy="-19" r="2.800" />}
        <circle cy={out} r="2.800" />
      </g>
    </g>
  );
};

const Badge = ({ name }: { name: string }) => {
  if (name === "smallLock") return <Icon name="smallLock" className="size-[10px]" />;
  return (
    <svg viewBox="0 0 10 10" className="size-[10px]" aria-hidden="true">
      {name === "tent" ? (
        <path d="M0 9h10M5 2v3M2 8l3-3 3 3z" stroke="#9aa07c" fill="#d6d8b6" />
      ) : (
        <path d="M5 1a4 4 0 1 0 .1 0M5 5l2-2" stroke="#d8d58a" fill="none" />
      )}
    </svg>
  );
};

const NodeLabel = ({ n }: { n: NetNode }) => (
  <div
    className="absolute flex flex-col whitespace-nowrap"
    style={{ left: n.x + (n.labelX ?? 36), top: n.y - 9 - (n.type ? 13 : 0) }}
  >
    {n.type && <span className="text-[11px] leading-[13px] text-[#5f6260]">{n.type}</span>}
    <span className="text-[12px] leading-[18px] text-[#d6d8d7]">{n.name}</span>
    {n.badges && <span className="flex gap-[3px] pl-px">{n.badges.map((b) => <Badge key={b} name={b} />)}</span>}
    {n.note && <span className={`text-[11px] leading-[17px] text-[#7d9fd0] ${n.noteGap ?? ""}`}>{n.note}</span>}
  </div>
);

/* ---------- parameters ---------- */

const Row = ({ h, label, dim, children, indent = "w-[142px]", id }: { h: string; label?: string; dim?: boolean; children?: ReactNode; indent?: string; id?: string }) => (
  <div className={`flex items-center ${h}`}>
    <label htmlFor={id} className={`shrink-0 text-right leading-[18px] ${indent} ${dim ? "text-[#8b8e8c]" : "text-[#c9cbca]"}`}>
      {label}
    </label>
    {children}
  </div>
);

const Check = ({ label, checked, dim, inset = "ml-[153px]", h }: { label: string; checked?: boolean; dim?: boolean; inset?: string; h: string }) => {
  const id = useId();
  return (
    <div className={`flex items-center ${h} ${inset}`}>
      <span className="relative flex size-[13px]">
        <input
          id={id}
          type="checkbox"
          defaultChecked={checked}
          disabled={dim}
          className="peer size-[13px] appearance-none bg-[#0e120f] disabled:bg-[#313432]"
        />
        <svg viewBox="0 0 13 13" className="pointer-events-none absolute inset-0 hidden size-[13px] peer-checked:block">
          <path d="M1 6l2-1 2 3 6-7 1 1-6 10H4z" fill={dim ? "#a5a8a6" : "#f0f1f0"} />
        </svg>
      </span>
      <label htmlFor={id} className={`ml-[8px] leading-[18px] ${dim ? "text-[#8b8e8c]" : "text-[#dfe1e0]"}`}>{label}</label>
    </div>
  );
};

const Field = ({ id, value = "", dim, className = "" }: { id: string; value?: string; dim?: boolean; className?: string }) => (
  <input
    id={id}
    type="text"
    defaultValue={value}
    disabled={dim}
    className={`h-[19px] min-w-0 px-[2px] text-[14px] leading-[18px] ${MONO} ${dim ? "bg-[#2b2f2c] text-[#535654]" : "bg-[#0e120f] text-[#e2e4e3]"} ${className}`}
  />
);

const ParmSelect = ({ id, value, dim, className }: { id: string; value: string; dim?: boolean; className: string }) => (
  <span className={`relative ml-[11px] flex h-[22px] ${className}`}>
    <select
      id={id}
      disabled={dim}
      className={`w-full appearance-none border-r border-b border-[#202321] pl-[13px] text-[11px] disabled:opacity-100 ${dim ? "bg-[#313432] text-[#8b8e8c]" : "bg-linear-to-b from-[#4a4d4b] to-[#3a3d3b] text-[#d6d8d7]"}`}
    >
      <option>{value}</option>
    </select>
    <span className="pointer-events-none absolute inset-y-0 right-0 flex w-[11px] items-center justify-center bg-[#2a2d2b]">
      <UpDown className={dim ? "text-[#5d605e]" : "text-[#8b8e8c]"} />
    </span>
  </span>
);

const box = "flex items-center justify-center border border-[#1c1f1d] bg-[#454846]";

const Parameters = () => (
  <form className="relative w-[387px] self-start border-l border-[#232624] bg-[#343735] pb-[41px] text-[11px]">
    <div className="flex h-[26px] items-center border-b border-black bg-[#393c3a] pl-[4px]">
      <Icon name="objMerge" />
      <label htmlFor="node-name" className="ml-[2px] font-bold text-[#e2e4e3]">Object Merge</label>
      <Field id="node-name" value="object_merge1" className="ml-[3px] flex-1" />
      <div className="mr-[4px] ml-[7px] flex gap-[6px]">
        <IconButton name="gear" label="Options" />
        <IconButton name="trowel" label="Presets" />
        <IconButton name="magnifier" label="Search" />
        <IconButton name="info" label="Info" size="size-[18px]" className="w-[20px]" />
        <IconButton name="help" label="Help" size="size-[18px]" className="w-[20px]" />
      </div>
    </div>
    <Row h="h-[27px]" label="Number of Objects" id="num">
      <Field id="num" value="1" className="ml-[11px] w-[42px]" />
      <button type="button" aria-label="Add" className={`h-[22px] w-[17px] ${box}`}><Plus /></button>
      <button type="button" aria-label="Remove" className={`h-[22px] w-[17px] ${box}`}><span className="h-[2px] w-[9px] bg-[#f0f1f0]" /></button>
      <button type="button" className={`h-[22px] w-[61px] text-[#d0d2d1] ${box}`}>Clear</button>
    </Row>
    <div className="flex h-[26px] items-center pl-[21px]">
      <button type="button" aria-label="Delete entry" className={`size-[18px] ${box}`}>
        <svg viewBox="0 0 8 8" className="size-[8px]"><path d="M1 1l6 6M7 1L1 7" stroke="#e8b8bd" strokeWidth="2" /></svg>
      </button>
      <button type="button" aria-label="Insert entry" className={`size-[18px] ${box}`}>
        <svg viewBox="0 0 10 12" className="h-[12px] w-[10px]"><path d="M5 4v8M1 8h8M2 3l3-2 3 2" fill="none" stroke="#e6e7e6" strokeWidth="1.600" /></svg>
      </button>
      <Check label="Enable Merge 1" checked inset="ml-[158px]" h="h-[20px]" />
    </div>
    <Row h="h-[22px]" label="Object 1" indent="w-[204px]" id="obj1">
      <Field id="obj1" value="/obj/model_cocktail_glass/OUT" className="ml-[10px] w-[100px] font-bold" />
      <IconButton name="jump" label="Jump to operator" size="size-[17px]" className="ml-[5px]" />
      <IconButton name="picker" label="Choose operator" className="ml-[5px]" />
    </Row>
    <Row h="h-[25px]" label="Group 1" indent="w-[204px]" id="grp1">
      <Field id="grp1" className="ml-[10px] w-[126px]" />
      <button type="button" aria-label="Groups" className={`h-[20px] w-[20px] text-[#8b8e8c] ${box}`}><Caret /></button>
    </Row>
    <Check label="Expand Group 1" dim inset="ml-[215px]" h="h-[20px]" />
    <hr className="my-[12px] mr-[8px] ml-[18px] border-t border-[#434644]" />
    <Row h="h-[23px]" label="Transform" id="xform"><ParmSelect id="xform" value="Into Specified Object" className="w-[135px]" /></Row>
    <Row h="h-[26px]" label="Transform Object" id="xobj">
      <Field id="xobj" className="ml-[11px] w-[175px]" />
      <IconButton name="jump" label="Jump to operator" size="size-[17px]" className="ml-[5px]" />
      <IconButton name="picker" label="Choose operator" className="ml-[5px]" />
    </Row>
    <Check label="Invert Transform" dim h="h-[20px]" />
    <Check label="Create Point Groups" h="h-[21px]" />
    <Row h="h-[20px]" label="Point Group Prefix" dim id="ptp"><Field id="ptp" value="_ptgrp_" dim className="mr-[9px] ml-[11px] flex-1" /></Row>
    <Check label="Create Primitive Groups" h="h-[21px]" />
    <Row h="h-[20px]" label="Primitive Group Prefix" dim id="prp"><Field id="prp" value="_primgrp_" dim className="mr-[9px] ml-[11px] flex-1" /></Row>
    <Check label="Verbose Group Names" dim h="h-[21px]" />
    <Check label="Add Suffix to First Group" checked dim h="h-[20px]" />
    <Check label="Create Per-Point Path" h="h-[21px]" />
    <Check label="Create Per-Primitive Path" h="h-[20px]" />
    <Row h="h-[21px]" label="Path Attribute" dim id="pa"><Field id="pa" value="objname" dim className="mr-[9px] ml-[11px] flex-1" /></Row>
    <Check label="Pack Geometry Before Merging" h="h-[20px]" />
    <Row h="h-[26px]" label="Pivot Location" dim id="piv"><ParmSelect id="piv" value="Centroid" dim className="w-[76px]" /></Row>
    <Row h="h-[26px]" label="Display As" dim id="disp"><ParmSelect id="disp" value="Full Geometry" dim className="w-[102px]" /></Row>
    <Check label="Add Path Attribute" checked dim h="h-[20px]" />
  </form>
);

const NetworkView = () => (
  <section className="flex min-h-0 min-w-0 flex-col border-l-[7px] border-[#3e4147] bg-[#292d2a]">
    <PaneTabs
      active={0}
      tabs={[["/obj/growth_source", "w-[119px]"], ["Tree View", "w-[77px]"], ["Material Palette", "w-[102px]"], ["Asset Browser", "w-[96px]"]]}
    />
    <PathBar back="text-[#dcdddc]">
      <IconButton name="pin" label="Pin" size="size-[18px]" className="ml-[9px]" />
      <IconButton name="target" label="Follow selection" className="mr-[3px] ml-[4px]" />
    </PathBar>
    <div className="flex h-[28px] shrink-0 items-center border-t border-b border-black bg-linear-to-b from-[#313432] to-[#393c3a] text-[12px] text-[#dddfde]">
      <span className="flex h-full w-[10px] justify-center border-r border-black bg-[#3b3e3c] pt-[2px] text-black"><Caret className="rotate-180" /></span>
      <nav className="flex gap-[13px] pl-[8px] leading-[22px]">
        {["Add", "Edit", "Go", "View", "Tools", "Layout", "Labs", "Help"].map((m) => <button key={m} type="button">{m}</button>)}
      </nav>
      <div className="mr-[2px] ml-auto flex items-center gap-[4px]">
        <IconButton name="wrench" label="Tools" />
        <IconButton name="tree" label="Tree" size="size-[18px]" className="w-[20px]" />
        <IconButton name="list" label="List" size="size-[18px]" className="w-[20px]" />
        <IconButton name="palette" label="Colors" size="size-[18px]" className="ml-[16px] w-[20px]" />
        <IconButton name="shapePalette" label="Shapes" size="size-[18px]" className="mr-[16px] w-[20px]" />
        <IconButton name="netbox" label="Network box" size="size-[18px]" className="w-[20px]" />
        <IconButton name="sticky" label="Sticky note" size="size-[19px]" className="w-[20px]" />
        <IconButton name="addPic" label="Background image" />
        <IconButton name="crate" label="Subnet" className="mr-[16px]" />
        <IconButton name="magnifier" label="Find" />
        <IconButton name="eye" label="Display" />
      </div>
    </div>

    <div className="relative flex min-h-0 flex-1 justify-end overflow-hidden">
      <div className="absolute inset-0">
        <p className="absolute top-[10px] left-[168px] text-[20px] leading-[28px] text-[#444745]">Indie Edition</p>
        <p className="absolute top-[12px] left-[330px] text-[22px] leading-[30px] font-bold text-[#505351]">Geometry</p>
        <svg className="absolute inset-0 h-full w-full" role="img" aria-label="Node network">
          {nodes.slice(0, 1).map((n) => <NodeShapeArt key={n.name} n={n} />)}
          <g fill="none" stroke="#65749a">{wires.map((d, i) => <path key={d} d={d} stroke={i < 2 ? "#7c7f88" : undefined} />)}</g>
          {nodes.slice(1).map((n) => <NodeShapeArt key={`${n.name}${n.y}`} n={n} />)}
          <path d="M153 246v15l4-3 2 5 2-1-2-5h5z" fill="#fff" stroke="#222" strokeWidth=".6" />
        </svg>
        {nodes.map((n) => <NodeLabel key={`${n.name}${n.y}`} n={n} />)}
      </div>
      <Parameters />
    </div>
  </section>
);

/* ---------- playbar ---------- */

const START = 1001;
const SPAN = 150;
const frames = Array.from({ length: SPAN }, (_, i) => START + i);
const pct = (frame: number) => `${((frame - START) / SPAN) * 100}%`;

const Timeline = () => (
  <div className="relative h-[30px] min-w-0 flex-1 text-[10px] text-[#9a9d9b]">
    <div className="absolute top-[7px] left-0 h-[10px] bg-[#0f62c4]" style={{ width: pct(1108) }} />
    <svg className="absolute inset-x-0 top-[11px] h-[13px] w-full" aria-hidden="true">
      <rect y="5" width="100%" height="1" fill="#9aa0a8" />
      {frames.map((f) => (
        <line key={f} x1={pct(f)} x2={pct(f)} y1="0" y2={(f - 1008) % 24 === 0 ? 13 : 9} stroke="#8d9195" />
      ))}
    </svg>
    <div className="absolute top-[16px] left-0 h-px bg-[#5aa0f0]" style={{ width: pct(1108) }} />
    {[1001, 1008, 1032, 1056, 1080, 1104, 1128].map((f) => (
      <span key={f} className="absolute -top-[9px] leading-[16px]" style={{ left: pct(f) }}>{f}</span>
    ))}
    <span className="absolute -top-[4px] -translate-x-1/2 text-[#dfe1e0]" style={{ left: pct(1084) }}>1084</span>
  </div>
);

const frameField = "h-[24px] bg-[#0e120f] px-[2px] text-[14px] text-[#e2e4e3]";
const pbBtn = "h-full border-r border-b border-[#1c1f1d] bg-linear-to-b from-[#4a4d4b] to-[#383b39]";

const PlayBar = () => (
  <div className="flex h-[70px] shrink-0 border-t border-[#6a6d6b] bg-[#2a2e2b]">
    <span className="flex w-[10px] shrink-0 items-end justify-center border-r border-black bg-[#3b3e3c] pb-[3px] text-black"><Caret /></span>
    <div className="flex min-w-0 flex-1 flex-col pl-[3px]">
      <div className="flex h-[43px] items-center">
        <div className="flex h-[28px] w-[136px]">
          {[["first", "First frame"], ["playBack", "Play reverse"], ["stop", "Stop"], ["play", "Play"], ["last", "Last frame"]].map(([icon, label]) => (
            <IconButton key={icon} name={icon} label={label} className={icon === "stop" ? "h-full w-[27px] bg-[#6f86ae]" : `w-[27px] ${pbBtn}`} />
          ))}
        </div>
        <input aria-label="Current frame" defaultValue="1084" className={`ml-[2px] h-[28px] w-[46px] bg-[#0e120f] px-px text-[14px] text-[#e2e4e3] ${MONO}`} />
        <div className="mr-[5px] flex h-[28px]">
          <IconButton name="prevKey" label="Previous key" size="size-[11px]" className={`w-[14px] ${pbBtn}`} />
          <IconButton name="nextKey" label="Next key" size="size-[11px]" className={`w-[13px] ${pbBtn}`} />
        </div>
        <Timeline />
      </div>
      <div className="flex h-[24px] items-center">
        <div className="flex h-[24px] w-[162px]">
          {[["pageCursor", "Playbar options"], ["speaker", "Audio"], ["loop", "Loop"], ["clock", "Real time"], ["ticksSet", "Integer frames"], ["channel", "Keys"]].map(([icon, label]) => (
            <IconButton key={icon} name={icon} label={label} className={icon === "clock" ? "h-full w-[27px] bg-[#6f86ae]" : `w-[27px] ${pbBtn}`} />
          ))}
        </div>
        <div className="mr-[6px] ml-[2px] flex h-[24px] w-[46px] border border-[#1c1f1d]">
          <IconButton name="stepBack" label="Step back" size="size-[12px]" className="flex-1" />
          <IconButton name="stepFwd" label="Step forward" size="size-[12px]" className="flex-1" />
        </div>
        <input aria-label="Global start" defaultValue="1001" className={`w-[42px] ${frameField} ${MONO}`} />
        <input aria-label="Range start" defaultValue="1001" className={`ml-[2px] w-[41px] ${frameField} ${MONO}`} />
        <div className="flex min-w-0 flex-1 items-center text-[#c9cbca]">
          <svg viewBox="0 0 6 12" className="h-[12px] w-[6px]"><path d="M0 0l6 6-6 6z" fill="currentColor" /></svg>
          <span className="h-[5px] flex-1 border-t border-[#8d908e] bg-[#707371]" />
          <svg viewBox="0 0 6 12" className="h-[12px] w-[6px]"><path d="M6 0L0 6l6 6z" fill="currentColor" /></svg>
        </div>
        <input aria-label="Range end" defaultValue="1150" className={`w-[42px] ${frameField} ${MONO}`} />
        <input aria-label="Global end" defaultValue="1150" className={`ml-[2px] w-[42px] ${frameField} ${MONO}`} />
      </div>
    </div>
    <div className="flex items-center pl-[3px]">
      <button type="button" aria-label="Set key" className="flex size-[38px] items-center justify-center rounded-full bg-[#313532]"><Icon name="key" className="size-[16px]" /></button>
      <button type="button" aria-label="Key options" className="-ml-[3px] flex h-[20px] w-[20px] items-center justify-center bg-[#3b3e3c] text-[#8b8e8c]"><Caret /></button>
    </div>
    <div className="mr-[3px] ml-[4px] grid w-[181px] grid-cols-[23px_1fr] content-center gap-x-[4px] gap-y-[3px] pb-[1px] text-[11px] text-[#d6d8d7]">
      <IconButton name="scopedKeys" label="Scoped channels" className="border border-[#1c1f1d] bg-[#454846]" />
      <button type="button" className={`relative h-[23px] pr-[16px] ${pbBtn}`}>
        0 keys, 0/0 channels
        <Caret className="absolute top-[9px] right-[5px] rotate-180 text-[#8b8e8c]" />
      </button>
      <IconButton name="graph" label="Animation editor" className="border border-[#1c1f1d] bg-[#454846]" />
      <span className="relative flex h-[24px]">
        <select aria-label="Key mode" className={`w-full appearance-none pl-[13px] ${pbBtn}`}><option>Key All Channels</option></select>
        <span className="pointer-events-none absolute inset-y-0 right-0 flex w-[10px] items-center justify-center bg-[#2a2d2b]"><UpDown /></span>
      </span>
    </div>
  </div>
);

const StatusBar = () => (
  <footer className="flex h-[26px] shrink-0 items-center justify-end bg-[#121713] text-[11px] text-[#d6d8d7]">
    <span className="flex h-full items-center bg-[#2a2e2b] px-[3px]"><Icon name="brain" /></span>
    <span className="relative flex h-[25px] w-[126px]">
      <select aria-label="Simulation" className="w-full appearance-none bg-[#3b3e3c] pl-[14px]"><option>/obj/growth_sour...</option></select>
      <span className="pointer-events-none absolute inset-y-0 right-0 flex w-[10px] items-center justify-center bg-[#2a2d2b]"><UpDown /></span>
    </span>
    <IconButton name="refresh" label="Recook" className="h-full w-[29px] bg-[#2a2e2b]" />
    <span className="relative flex h-[25px] w-[100px]">
      <select aria-label="Update mode" className="w-full appearance-none bg-[#3b3e3c] pl-[14px]"><option>Auto Update</option></select>
      <span className="pointer-events-none absolute inset-y-0 right-0 flex w-[11px] items-center justify-center bg-[#2a2d2b]"><UpDown /></span>
    </span>
  </footer>
);

const Subtitles = () => (
  <div className="pointer-events-none absolute bottom-[74px] left-1/2 flex h-[76px] -translate-x-1/2 flex-col items-center bg-black/70 text-center whitespace-nowrap text-white">
    <p className="mt-px text-[28px] leading-[38px] [text-shadow:0_0_2px_#000]">首先，我们有我们的玻璃对象，我们只是从体积中获取点</p>
    <p className='px-[3px] font-["Open_Sans",sans-serif] text-[29px] leading-[34px] [text-shadow:0_0_2px_#000]'>
      So first of all, we have our glass object and we're just doing a points from volume
    </p>
  </div>
);

export default function App() {
  return (
    <main className={`relative flex h-screen flex-col overflow-hidden bg-[#2a2d2b] ${UI}`}>
      <SharedDefs />
      <TitleBar />
      <MenuBar />
      <div className="grid h-[57px] shrink-0 grid-cols-[9px_956fr_10px_945fr]">
        <span className="flex justify-center border-r border-black bg-[#3b3e3c] pt-[3px] text-black"><Caret className="rotate-180" /></span>
        <Shelf tabs={createTabs} tools={createTools} pad="pl-[17px]" />
        <span className="flex flex-col items-center justify-center gap-[2px] border-x border-black bg-[#3b3e3c]">
          {[0, 1, 2].map((i) => <i key={i} className="size-[2px] bg-[#111]" />)}
        </span>
        <Shelf tabs={lightTabs} tools={lightTools} pad="pl-[10px]" />
      </div>
      <div className="grid min-h-0 flex-1 grid-cols-[1071fr_849fr] grid-rows-1">
        <SceneView />
        <NetworkView />
      </div>
      <PlayBar />
      <StatusBar />
      <Subtitles />
    </main>
  );
}
